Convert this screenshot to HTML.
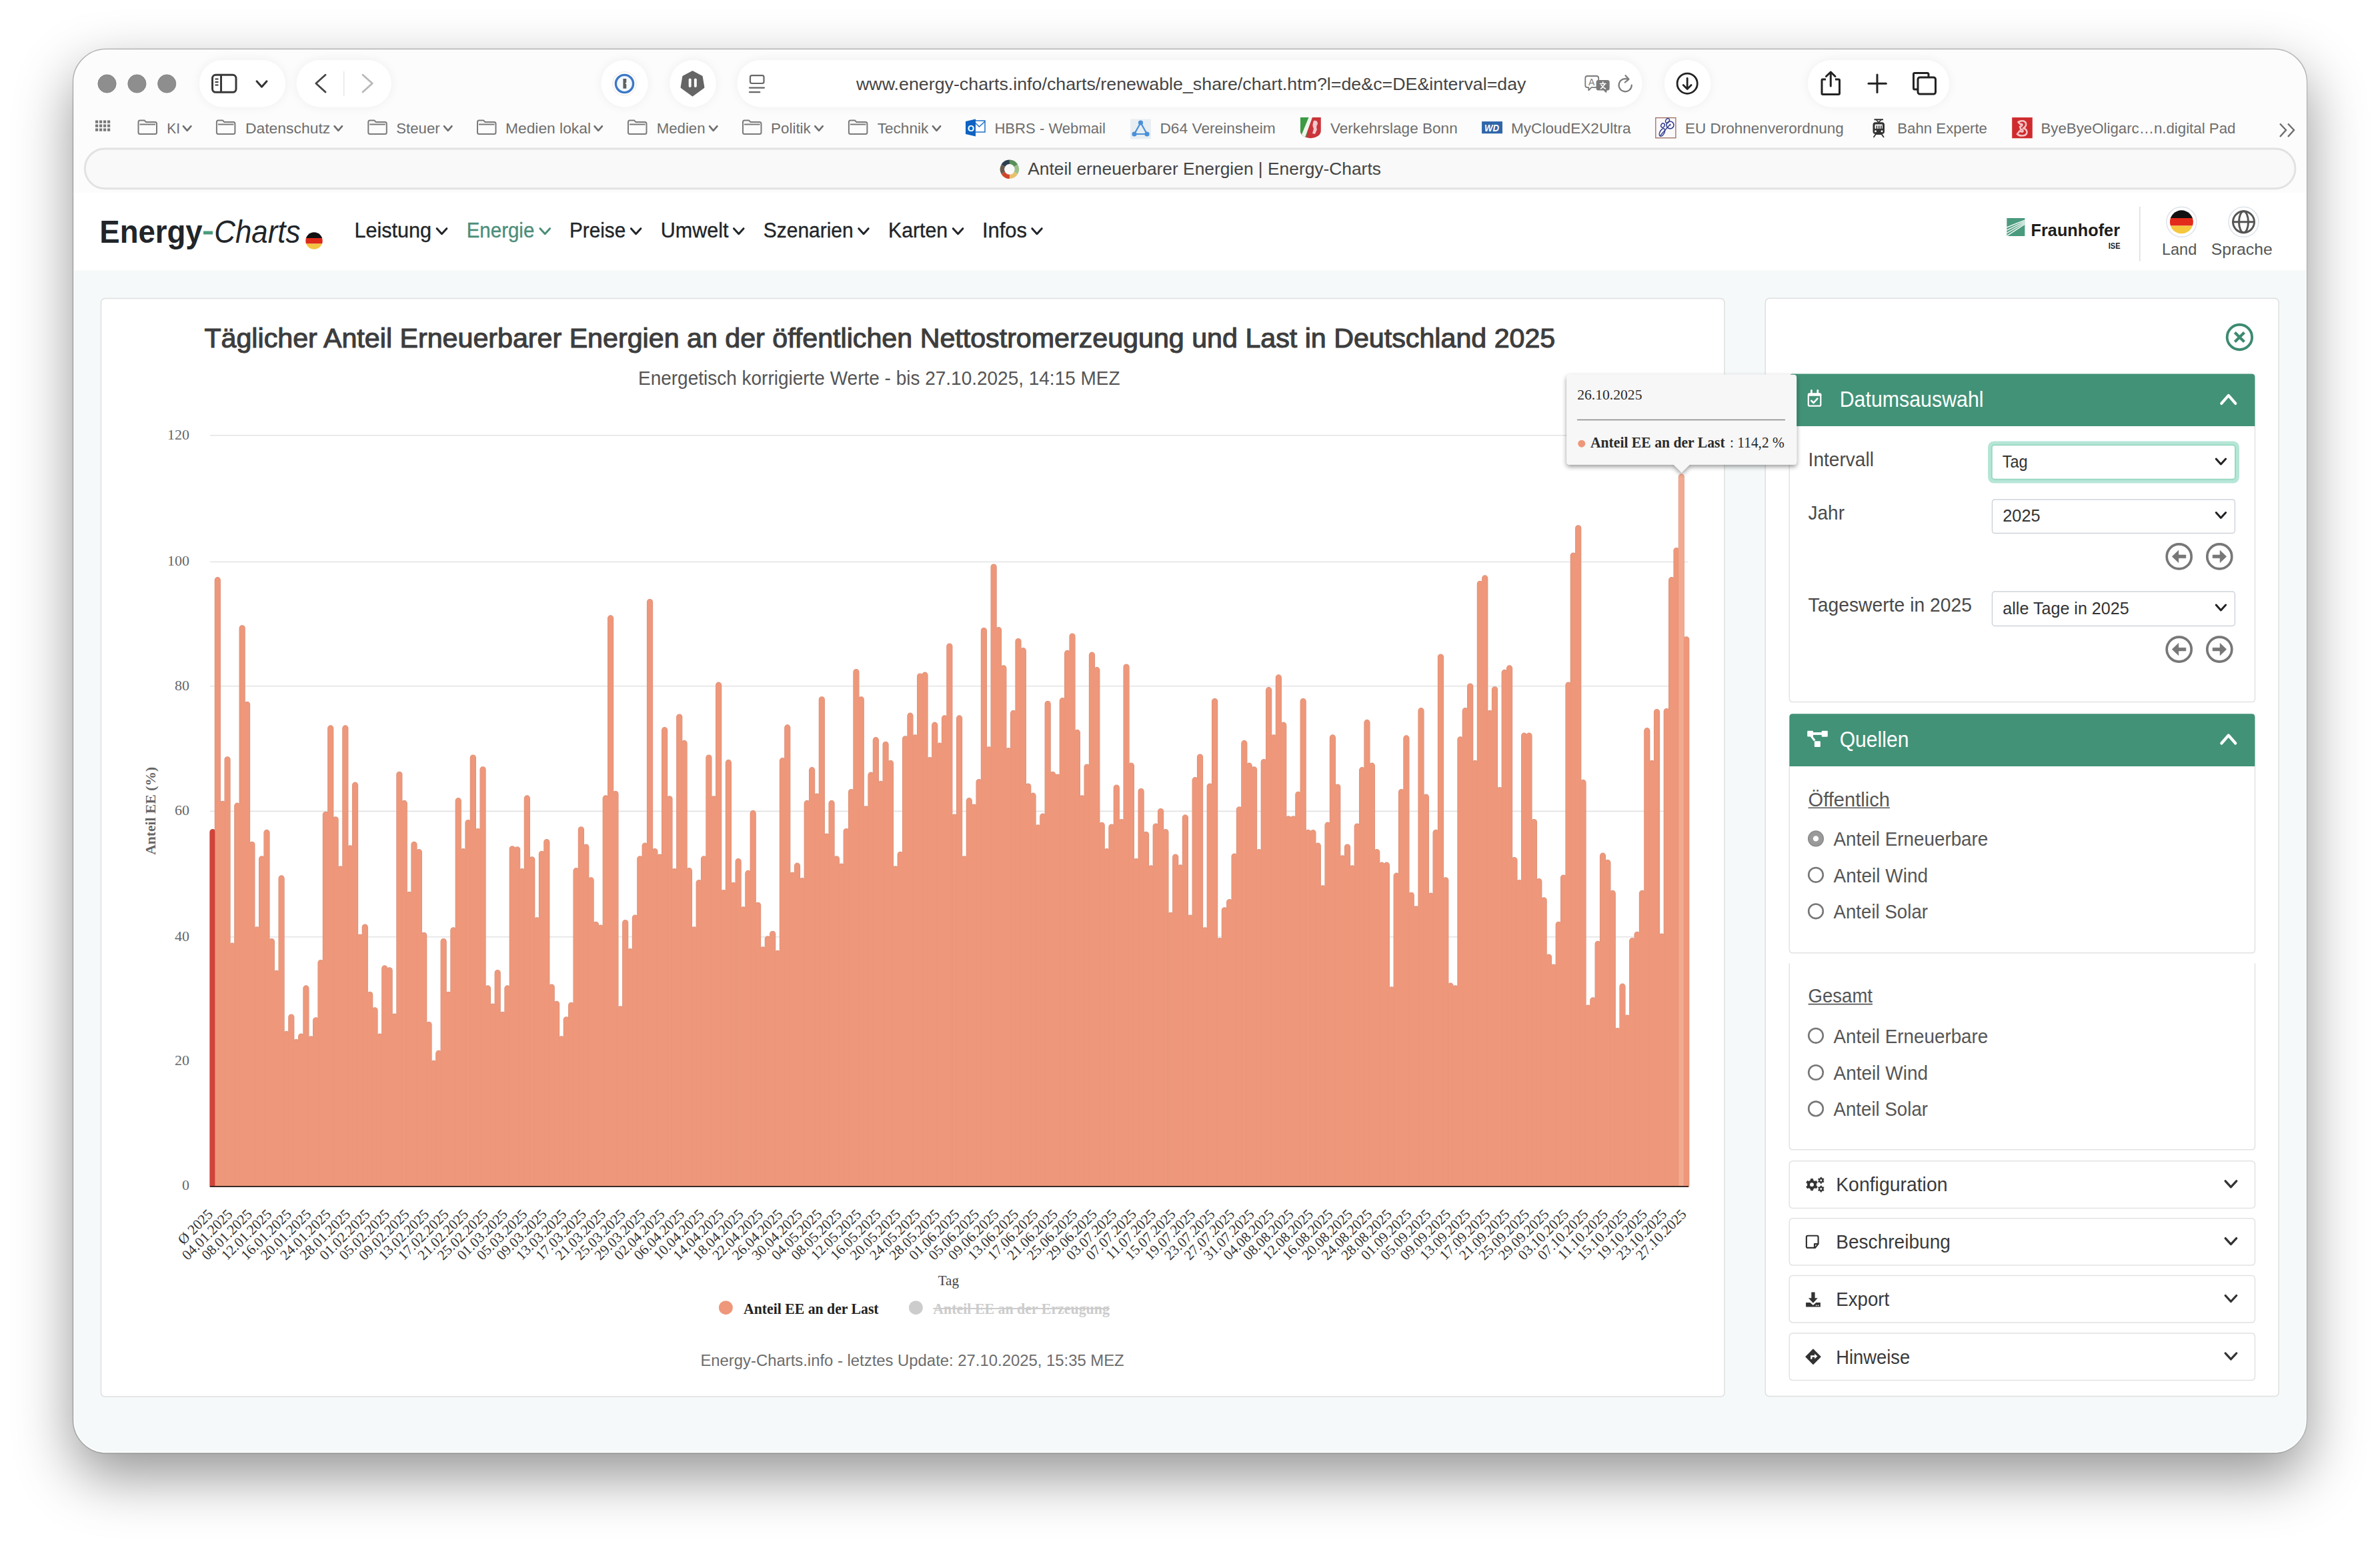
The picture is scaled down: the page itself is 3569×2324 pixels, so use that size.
<!DOCTYPE html>
<html><head><meta charset="utf-8"><title>Energy-Charts</title>
<style>
html,body{margin:0;padding:0;background:#ffffff;width:3569px;height:2324px;overflow:hidden;}
#win{position:absolute;left:109.5px;top:73.5px;width:3350.0px;height:2105.3px;border-radius:50px;background:#fcfcfc;
box-shadow:0 34px 86px 0 rgba(0,0,0,0.42);}
svg{position:absolute;left:0;top:0;}
</style></head><body>
<div id="win"></div>
<svg width="3569" height="2324" viewBox="0 0 3569 2324">
<defs>
<clipPath id="winclip"><rect x="109.5" y="73.5" width="3350.0" height="2105.3" rx="50" ry="50"/></clipPath>
<filter id="pillsh" x="-30%" y="-60%" width="160%" height="220%"><feGaussianBlur in="SourceAlpha" stdDeviation="8"/><feComponentTransfer><feFuncA type="linear" slope="0.06"/></feComponentTransfer><feMerge><feMergeNode/><feMergeNode in="SourceGraphic"/></feMerge></filter>
<filter id="ttsh" x="-10%" y="-20%" width="120%" height="150%"><feGaussianBlur in="SourceAlpha" stdDeviation="3.5"/><feOffset dy="3"/><feComponentTransfer><feFuncA type="linear" slope="0.42"/></feComponentTransfer><feMerge><feMergeNode/><feMergeNode in="SourceGraphic"/></feMerge></filter>
<filter id="glow" x="-10%" y="-30%" width="120%" height="160%"><feGaussianBlur stdDeviation="2"/></filter>
</defs>
<g clip-path="url(#winclip)">

<rect x="109.5" y="73.5" width="3350.0" height="220" fill="#fcfcfc"/>
<rect x="109.5" y="289" width="3350.0" height="117" fill="#ffffff"/>
<rect x="109.5" y="405.5" width="3350.0" height="1773.3000000000002" fill="#f5f9fa"/>
<circle cx="160.5" cy="125.5" r="13.6" fill="#8e8e8e" stroke="#7d7d7d" stroke-width="0.8"/>
<circle cx="205.4" cy="125.5" r="13.6" fill="#8e8e8e" stroke="#7d7d7d" stroke-width="0.8"/>
<circle cx="250.2" cy="125.5" r="13.6" fill="#8e8e8e" stroke="#7d7d7d" stroke-width="0.8"/>
<rect x="299" y="90" width="129.0" height="70.3" rx="35.2" fill="#ffffff" filter="url(#pillsh)"/>
<rect x="444.7" y="90" width="142.1" height="70.3" rx="35.2" fill="#ffffff" filter="url(#pillsh)"/>
<rect x="901.5" y="90" width="70.0" height="70.3" rx="35.2" fill="#ffffff" filter="url(#pillsh)"/>
<rect x="1004.5" y="90" width="69.2" height="70.3" rx="35.2" fill="#ffffff" filter="url(#pillsh)"/>
<rect x="1105.5" y="90" width="1356.9" height="70.3" rx="35.2" fill="#ffffff" filter="url(#pillsh)"/>
<rect x="2496" y="90" width="69.3" height="70.3" rx="35.2" fill="#ffffff" filter="url(#pillsh)"/>
<rect x="2711" y="90" width="212.0" height="70.3" rx="35.2" fill="#ffffff" filter="url(#pillsh)"/>
<rect x="318.5" y="112.3" width="35.5" height="26" rx="5" fill="none" stroke="#3a3a3a" stroke-width="3"/>
<line x1="331.5" y1="112.3" x2="331.5" y2="138.3" stroke="#3a3a3a" stroke-width="3"/>
<line x1="322.5" y1="118.5" x2="327.5" y2="118.5" stroke="#3a3a3a" stroke-width="1.8"/>
<line x1="322.5" y1="123" x2="327.5" y2="123" stroke="#3a3a3a" stroke-width="1.8"/>
<line x1="322.5" y1="127.5" x2="327.5" y2="127.5" stroke="#3a3a3a" stroke-width="1.8"/>
<polyline points="385.0,121.8 392.5,130.2 400.0,121.8" fill="none" stroke="#333" stroke-width="3" stroke-linecap="round" stroke-linejoin="round"/>
<polyline points="488,112.3 473.8,125 488,138" fill="none" stroke="#444" stroke-width="2.8" stroke-linecap="round" stroke-linejoin="round"/>
<line x1="515.7" y1="107" x2="515.7" y2="144" stroke="#e6e6e6" stroke-width="1.5"/>
<polyline points="544,112.3 558.3,125 544,138" fill="none" stroke="#b8b8b8" stroke-width="2.8" stroke-linecap="round" stroke-linejoin="round"/>
<circle cx="936.5" cy="125.5" r="17.8" fill="#ffffff" stroke="#e6dfd8" stroke-width="0.8"/>
<circle cx="936.5" cy="125.5" r="13.1" fill="#f4f9ff" stroke="#3d79c6" stroke-width="3.4"/>
<path d="M934.4,118 L939.3,118 L939.3,123.5 L937.6,125 L939.3,126.5 L939.3,132.7 L934.4,132.7 Z" fill="#5f5f5f"/>
<polygon points="1038.5,107.3 1052.6,114.8 1055.3,131 1038.5,143.4 1021.7,131 1024.4,114.8" fill="#656565" stroke="#656565" stroke-width="2.2" stroke-linejoin="round"/>
<rect x="1032.7" y="117.4" width="3.9" height="13.6" rx="1.9" fill="#fff"/><rect x="1040.9" y="117.4" width="3.9" height="13.6" rx="1.9" fill="#fff"/>
<rect x="1125" y="113.2" width="20.5" height="11.8" rx="2.5" fill="none" stroke="#666" stroke-width="2.2"/>
<line x1="1124" y1="131.6" x2="1146" y2="131.6" stroke="#666" stroke-width="2.2" stroke-linecap="round"/><line x1="1124" y1="138.2" x2="1139.3" y2="138.2" stroke="#666" stroke-width="2.2" stroke-linecap="round"/>
<text x="1284.0" y="135.1" font-family='"Liberation Sans", sans-serif' font-size="26.2" font-weight="normal" fill="#454545" text-anchor="start" textLength="1004.5" lengthAdjust="spacingAndGlyphs" >www.energy-charts.info/charts/renewable_share/chart.htm?l=de&amp;c=DE&amp;interval=day</text>
<path d="M2380.5,114 L2394,114 Q2397.2,114 2397.2,117.2 L2397.2,128 Q2397.2,131.2 2394,131.2 L2386.5,131.2 L2382.3,135.3 L2382.3,131.2 L2380.5,131.2 Q2377.3,131.2 2377.3,128 L2377.3,117.2 Q2377.3,114 2380.5,114 Z" fill="#fff" stroke="#7a7a7a" stroke-width="1.8" stroke-linejoin="round"/>
<text x="2382" y="128" font-family='"Liberation Sans", sans-serif' font-size="14" fill="#7a7a7a">A</text>
<path d="M2397,120 L2410.3,120 Q2413.7,120 2413.7,123.4 L2413.7,132.2 Q2413.7,135.6 2410.3,135.6 L2409.8,135.6 L2408.8,139.6 L2404.5,135.6 L2397,135.6 Q2393.6,135.6 2393.6,132.2 L2393.6,123.4 Q2393.6,120 2397,120 Z" fill="#7a7a7a"/>
<path d="M2399.5,125.5 L2408,125.5 M2403.7,122.8 L2403.7,125.5 M2400.5,133 Q2404.5,130 2406.5,125.8 M2401.2,127.5 Q2403.5,131 2407.5,133" fill="none" stroke="#fff" stroke-width="1.6" stroke-linecap="round"/>
<path d="M2446.8,127.7 A9.6,9.6 0 1 1 2441.5,119.1" fill="none" stroke="#7a7a7a" stroke-width="2.2" stroke-linecap="round"/>
<polyline points="2437.5,113.2 2442.5,118.8 2436.8,123.5" fill="none" stroke="#7a7a7a" stroke-width="2.2" stroke-linecap="round" stroke-linejoin="round"/>
<circle cx="2530.2" cy="125.2" r="15.1" fill="none" stroke="#222" stroke-width="2.8"/>
<line x1="2530.2" y1="117.5" x2="2530.2" y2="133" stroke="#222" stroke-width="2.8" stroke-linecap="round"/>
<polyline points="2524.2,127.6 2530.2,133.4 2536.2,127.6" fill="none" stroke="#222" stroke-width="2.8" stroke-linecap="round" stroke-linejoin="round"/>
<path d="M2738,119 L2733,119 Q2732,119 2732,120.5 L2732,140 Q2732,141.5 2733.5,141.5 L2757,141.5 Q2758.5,141.5 2758.5,140 L2758.5,120.5 Q2758.5,119 2757,119 L2752,119" fill="none" stroke="#222" stroke-width="3" stroke-linejoin="round"/>
<line x1="2745.3" y1="108.5" x2="2745.3" y2="129" stroke="#222" stroke-width="3" stroke-linecap="round"/>
<polyline points="2738.5,114.5 2745.3,108 2752,114.5" fill="none" stroke="#222" stroke-width="3" stroke-linecap="round" stroke-linejoin="round"/>
<line x1="2815" y1="112" x2="2815" y2="138.5" stroke="#222" stroke-width="3" stroke-linecap="round"/><line x1="2802" y1="125.3" x2="2828.3" y2="125.3" stroke="#222" stroke-width="3" stroke-linecap="round"/>
<path d="M2875,134 L2871,134 Q2869.5,134 2869.5,132 L2869.5,111 Q2869.5,109.5 2871.5,109.5 L2890,109.5 Q2892,109.5 2892,111.5 L2892,115" fill="none" stroke="#222" stroke-width="3"/>
<rect x="2876" y="116" width="26.5" height="25" rx="3" fill="none" stroke="#222" stroke-width="3"/>
<rect x="143.0" y="180.5" width="4.2" height="4.2" fill="#777"/>
<rect x="149.0" y="180.5" width="4.2" height="4.2" fill="#777"/>
<rect x="155.0" y="180.5" width="4.2" height="4.2" fill="#777"/>
<rect x="161.0" y="180.5" width="4.2" height="4.2" fill="#777"/>
<rect x="143.0" y="186.5" width="4.2" height="4.2" fill="#777"/>
<rect x="149.0" y="186.5" width="4.2" height="4.2" fill="#777"/>
<rect x="155.0" y="186.5" width="4.2" height="4.2" fill="#777"/>
<rect x="161.0" y="186.5" width="4.2" height="4.2" fill="#777"/>
<rect x="143.0" y="192.5" width="4.2" height="4.2" fill="#777"/>
<rect x="149.0" y="192.5" width="4.2" height="4.2" fill="#777"/>
<rect x="155.0" y="192.5" width="4.2" height="4.2" fill="#777"/>
<rect x="161.0" y="192.5" width="4.2" height="4.2" fill="#777"/>
<path d="M207.5,183 Q207.5,180.5 210.0,180.5 L216.5,180.5 L219.0,183 L232.5,183 Q235.0,183 235.0,185.5 L235.0,198.5 Q235.0,201 232.5,201 L210.0,201 Q207.5,201 207.5,198.5 Z" fill="none" stroke="#7a7a7a" stroke-width="2"/>
<line x1="209.5" y1="186.5" x2="233.0" y2="186.5" stroke="#7a7a7a" stroke-width="2"/>
<text x="250.2" y="199.8" font-family='"Liberation Sans", sans-serif' font-size="22.2" font-weight="normal" fill="#6e6e6e" text-anchor="start" textLength="19.8" lengthAdjust="spacingAndGlyphs" >KI</text>
<polyline points="274.9,189.2 280.7,195.8 286.4,189.2" fill="none" stroke="#6e6e6e" stroke-width="2.6" stroke-linecap="round" stroke-linejoin="round"/>
<path d="M324.9,183 Q324.9,180.5 327.4,180.5 L333.9,180.5 L336.4,183 L349.9,183 Q352.4,183 352.4,185.5 L352.4,198.5 Q352.4,201 349.9,201 L327.4,201 Q324.9,201 324.9,198.5 Z" fill="none" stroke="#7a7a7a" stroke-width="2"/>
<line x1="326.9" y1="186.5" x2="350.4" y2="186.5" stroke="#7a7a7a" stroke-width="2"/>
<text x="368.0" y="199.8" font-family='"Liberation Sans", sans-serif' font-size="22.2" font-weight="normal" fill="#6e6e6e" text-anchor="start" textLength="127.2" lengthAdjust="spacingAndGlyphs" >Datenschutz</text>
<polyline points="501.6,189.2 507.3,195.8 513.0,189.2" fill="none" stroke="#6e6e6e" stroke-width="2.6" stroke-linecap="round" stroke-linejoin="round"/>
<path d="M552.3,183 Q552.3,180.5 554.8,180.5 L561.3,180.5 L563.8,183 L577.3,183 Q579.8,183 579.8,185.5 L579.8,198.5 Q579.8,201 577.3,201 L554.8,201 Q552.3,201 552.3,198.5 Z" fill="none" stroke="#7a7a7a" stroke-width="2"/>
<line x1="554.3" y1="186.5" x2="577.8" y2="186.5" stroke="#7a7a7a" stroke-width="2"/>
<text x="594.3" y="199.8" font-family='"Liberation Sans", sans-serif' font-size="22.2" font-weight="normal" fill="#6e6e6e" text-anchor="start" textLength="65.4" lengthAdjust="spacingAndGlyphs" >Steuer</text>
<polyline points="666.0,189.2 671.8,195.8 677.5,189.2" fill="none" stroke="#6e6e6e" stroke-width="2.6" stroke-linecap="round" stroke-linejoin="round"/>
<path d="M716,183 Q716,180.5 718.5,180.5 L725,180.5 L727.5,183 L741,183 Q743.5,183 743.5,185.5 L743.5,198.5 Q743.5,201 741,201 L718.5,201 Q716,201 716,198.5 Z" fill="none" stroke="#7a7a7a" stroke-width="2"/>
<line x1="718" y1="186.5" x2="741.5" y2="186.5" stroke="#7a7a7a" stroke-width="2"/>
<text x="758.0" y="199.8" font-family='"Liberation Sans", sans-serif' font-size="22.2" font-weight="normal" fill="#6e6e6e" text-anchor="start" textLength="128.0" lengthAdjust="spacingAndGlyphs" >Medien lokal</text>
<polyline points="891.5,189.2 897.2,195.8 903.0,189.2" fill="none" stroke="#6e6e6e" stroke-width="2.6" stroke-linecap="round" stroke-linejoin="round"/>
<path d="M942,183 Q942,180.5 944.5,180.5 L951,180.5 L953.5,183 L967,183 Q969.5,183 969.5,185.5 L969.5,198.5 Q969.5,201 967,201 L944.5,201 Q942,201 942,198.5 Z" fill="none" stroke="#7a7a7a" stroke-width="2"/>
<line x1="944" y1="186.5" x2="967.5" y2="186.5" stroke="#7a7a7a" stroke-width="2"/>
<text x="984.7" y="199.8" font-family='"Liberation Sans", sans-serif' font-size="22.2" font-weight="normal" fill="#6e6e6e" text-anchor="start" textLength="72.9" lengthAdjust="spacingAndGlyphs" >Medien</text>
<polyline points="1064.0,189.2 1069.7,195.8 1075.5,189.2" fill="none" stroke="#6e6e6e" stroke-width="2.6" stroke-linecap="round" stroke-linejoin="round"/>
<path d="M1114,183 Q1114,180.5 1116.5,180.5 L1123,180.5 L1125.5,183 L1139,183 Q1141.5,183 1141.5,185.5 L1141.5,198.5 Q1141.5,201 1139,201 L1116.5,201 Q1114,201 1114,198.5 Z" fill="none" stroke="#7a7a7a" stroke-width="2"/>
<line x1="1116" y1="186.5" x2="1139.5" y2="186.5" stroke="#7a7a7a" stroke-width="2"/>
<text x="1156.0" y="199.8" font-family='"Liberation Sans", sans-serif' font-size="22.2" font-weight="normal" fill="#6e6e6e" text-anchor="start" textLength="59.8" lengthAdjust="spacingAndGlyphs" >Politik</text>
<polyline points="1222.2,189.2 1228.0,195.8 1233.8,189.2" fill="none" stroke="#6e6e6e" stroke-width="2.6" stroke-linecap="round" stroke-linejoin="round"/>
<path d="M1272.9,183 Q1272.9,180.5 1275.4,180.5 L1281.9,180.5 L1284.4,183 L1297.9,183 Q1300.4,183 1300.4,185.5 L1300.4,198.5 Q1300.4,201 1297.9,201 L1275.4,201 Q1272.9,201 1272.9,198.5 Z" fill="none" stroke="#7a7a7a" stroke-width="2"/>
<line x1="1274.9" y1="186.5" x2="1298.4" y2="186.5" stroke="#7a7a7a" stroke-width="2"/>
<text x="1315.7" y="199.8" font-family='"Liberation Sans", sans-serif' font-size="22.2" font-weight="normal" fill="#6e6e6e" text-anchor="start" textLength="76.6" lengthAdjust="spacingAndGlyphs" >Technik</text>
<polyline points="1398.8,189.2 1404.5,195.8 1410.2,189.2" fill="none" stroke="#6e6e6e" stroke-width="2.6" stroke-linecap="round" stroke-linejoin="round"/>
<text x="1491.4" y="199.8" font-family='"Liberation Sans", sans-serif' font-size="22.2" font-weight="normal" fill="#6e6e6e" text-anchor="start" textLength="166.5" lengthAdjust="spacingAndGlyphs" >HBRS - Webmail</text>
<text x="1739.4" y="199.8" font-family='"Liberation Sans", sans-serif' font-size="22.2" font-weight="normal" fill="#6e6e6e" text-anchor="start" textLength="173.3" lengthAdjust="spacingAndGlyphs" >D64 Vereinsheim</text>
<text x="1995.0" y="199.8" font-family='"Liberation Sans", sans-serif' font-size="22.2" font-weight="normal" fill="#6e6e6e" text-anchor="start" textLength="190.7" lengthAdjust="spacingAndGlyphs" >Verkehrslage Bonn</text>
<text x="2266.0" y="199.8" font-family='"Liberation Sans", sans-serif' font-size="22.2" font-weight="normal" fill="#6e6e6e" text-anchor="start" textLength="179.6" lengthAdjust="spacingAndGlyphs" >MyCloudEX2Ultra</text>
<text x="2527.1" y="199.8" font-family='"Liberation Sans", sans-serif' font-size="22.2" font-weight="normal" fill="#6e6e6e" text-anchor="start" textLength="237.6" lengthAdjust="spacingAndGlyphs" >EU Drohnenverordnung</text>
<text x="2845.2" y="199.8" font-family='"Liberation Sans", sans-serif' font-size="22.2" font-weight="normal" fill="#6e6e6e" text-anchor="start" textLength="134.8" lengthAdjust="spacingAndGlyphs" >Bahn Experte</text>
<text x="3060.5" y="199.8" font-family='"Liberation Sans", sans-serif' font-size="22.2" font-weight="normal" fill="#6e6e6e" text-anchor="start" textLength="291.9" lengthAdjust="spacingAndGlyphs" >ByeByeOligarc…n.digital Pad</text>
<rect x="1460" y="181" width="17" height="17" fill="#fff" stroke="#1f6fc5" stroke-width="1.5"/>
<polyline points="1460,182 1468.5,190 1477,182" fill="none" stroke="#1f6fc5" stroke-width="1.5"/>
<path d="M1448,182 L1463,178.5 L1463,204.5 L1448,201 Z" fill="#0f62c1"/>
<text x="1451" y="197" font-family='"Liberation Sans", sans-serif' font-size="13" font-weight="bold" fill="#fff">O</text>
<rect x="1695.2" y="178.5" width="30.7" height="30" fill="#e8eef2"/>
<polygon points="1710.5,184 1701,201 1720,201" fill="none" stroke="#4a90d9" stroke-width="2.2"/>
<circle cx="1710.5" cy="184" r="3.6" fill="#4a90d9"/>
<circle cx="1701" cy="201" r="3.6" fill="#4a90d9"/>
<circle cx="1720" cy="201" r="3.6" fill="#4a90d9"/>
<clipPath id="nrwclip"><path d="M1950,176 L1980.8,176 L1980.8,196 Q1980.8,205.5 1965.4,207.3 Q1950,205.5 1950,196 Z"/></clipPath>
<g clip-path="url(#nrwclip)"><rect x="1950" y="176" width="31" height="32" fill="#c9353b"/>
<polygon points="1950,176 1966,176 1958,208 1950,208" fill="#3c9a43"/>
<polygon points="1962.5,176 1968,176 1956.5,207.5 1951,204" fill="#eef6ee"/>
<path d="M1970,181 Q1976,180 1976,186 Q1973,189 1975,194 L1972,201 L1968,200 L1970,193 Q1967,188 1970,181 Z" fill="#f3c9cc"/>
</g>
<rect x="2222.1" y="182.1" width="30.9" height="18.1" fill="#2f66a9"/>
<text x="2226" y="197" font-family='"Liberation Sans", sans-serif' font-size="14.5" font-style="italic" font-weight="bold" fill="#fff" textLength="22" lengthAdjust="spacingAndGlyphs">WD</text>
<rect x="2482.8" y="176.6" width="30.1" height="30.2" fill="#fbf8fa" stroke="#9c6d5f" stroke-width="1.3"/>
<circle cx="2504.5" cy="187.5" r="5.5" fill="none" stroke="#2c3a8c" stroke-width="1.5"/>
<circle cx="2504.5" cy="187.5" r="1" fill="#2c3a8c"/>
<ellipse cx="2492.5" cy="198.5" rx="3.3" ry="6.3" transform="rotate(30 2492.5 198.5)" fill="none" stroke="#2c3a8c" stroke-width="1.5"/>
<ellipse cx="2500.5" cy="181" rx="2.6" ry="3.6" transform="rotate(30 2500.5 181)" fill="none" stroke="#2c3a8c" stroke-width="1.4"/>
<ellipse cx="2493.5" cy="188" rx="2.6" ry="3.2" transform="rotate(30 2493.5 188)" fill="none" stroke="#2c3a8c" stroke-width="1.4"/>
<line x1="2489" y1="204" x2="2505" y2="186" stroke="#2c3a8c" stroke-width="1.3"/>
<line x1="2810.5" y1="179.2" x2="2824" y2="179.2" stroke="#333" stroke-width="2"/>
<polyline points="2813.5,179.5 2817.2,183.5 2821,179.5" fill="none" stroke="#333" stroke-width="1.6"/>
<rect x="2808.5" y="183.3" width="17.5" height="17.8" rx="4" fill="#333"/>
<rect x="2811.5" y="186.5" width="11.5" height="6.5" rx="1" fill="#fff"/>
<rect x="2813.6" y="188.3" width="1.6" height="4.7" fill="#333"/><rect x="2816.9" y="188.3" width="1.6" height="4.7" fill="#333"/><rect x="2820.2" y="188.3" width="1.6" height="4.7" fill="#333"/>
<circle cx="2812.5" cy="196.8" r="1.5" fill="#fff"/><circle cx="2822" cy="196.8" r="1.5" fill="#fff"/>
<polyline points="2809.5,206 2813,201 2821.5,201 2825,206" fill="none" stroke="#333" stroke-width="1.8"/>
<rect x="3017.2" y="176.1" width="30.6" height="31.2" fill="#cf2b2e"/>
<path d="M3026.5,183 Q3030,180.5 3034.5,181.5 Q3039,183 3038,188 Q3037,191 3034,192.3 Q3040,194 3039.5,199 Q3038.5,203.5 3032,203.5 Q3027.5,203.5 3025,201 L3029,196 Q3032,198.5 3033.5,197 Q3034,194.5 3030.5,194 L3029,190 Q3032.5,189 3032.5,187 Q3032,185.5 3030,186.5 Z" fill="none" stroke="#f4c4c6" stroke-width="2.6" stroke-linejoin="round"/>
<polyline points="3419,185.5 3428,195 3419,205" fill="none" stroke="#6e6e6e" stroke-width="2.4"/><polyline points="3431,185.5 3440,195 3431,205" fill="none" stroke="#6e6e6e" stroke-width="2.4"/>
<rect x="127.3" y="222.9" width="3314.6" height="59.8" rx="29.9" fill="#f9f9f9" stroke="#e2e2e2" stroke-width="3"/>
<path d="M1513.9,242.8 A11,11 0 0 1 1523.4,248.3" fill="none" stroke="#5a8f5a" stroke-width="6.5"/>
<path d="M1523.4,248.3 A11,11 0 0 1 1523.4,259.3" fill="none" stroke="#9dc08b" stroke-width="6.5"/>
<path d="M1523.4,259.3 A11,11 0 0 1 1513.9,264.8" fill="none" stroke="#e8c170" stroke-width="6.5"/>
<path d="M1513.9,264.8 A11,11 0 0 1 1504.4,259.3" fill="none" stroke="#d0442c" stroke-width="6.5"/>
<path d="M1504.4,259.3 A11,11 0 0 1 1504.4,248.3" fill="none" stroke="#6b5b4b" stroke-width="6.5"/>
<path d="M1504.4,248.3 A11,11 0 0 1 1513.9,242.8" fill="none" stroke="#2c3e50" stroke-width="6.5"/>
<text x="1541.2" y="261.9" font-family='"Liberation Sans", sans-serif' font-size="25.6" font-weight="normal" fill="#444" text-anchor="start" textLength="529.7" lengthAdjust="spacingAndGlyphs" >Anteil erneuerbarer Energien | Energy-Charts</text>
<text x="149.3" y="364.0" font-family='"Liberation Sans", sans-serif' font-size="48.5" font-weight="bold" fill="#212529" text-anchor="start" textLength="154.4" lengthAdjust="spacingAndGlyphs" >Energy</text>
<rect x="305" y="346.5" width="14" height="5" fill="#4a9a7a"/>
<text x="321.3" y="364.0" font-family='"Liberation Sans", sans-serif' font-size="48.5" font-weight="normal" fill="#212529" text-anchor="start" textLength="129.0" lengthAdjust="spacingAndGlyphs" font-style="italic">Charts</text>
<clipPath id="flag1"><circle cx="471" cy="361" r="12.7"/></clipPath>
<g clip-path="url(#flag1)"><rect x="458" y="348" width="26" height="9" fill="#111"/><rect x="458" y="357" width="26" height="8.5" fill="#dd2a1a"/><rect x="458" y="365.5" width="26" height="9" fill="#f4c542"/></g>
<text x="531.4" y="356.3" font-family='"Liberation Sans", sans-serif' font-size="31" font-weight="normal" fill="#212529" text-anchor="start" textLength="115.6" lengthAdjust="spacingAndGlyphs" stroke="#212529" stroke-width="0.35">Leistung</text>
<polyline points="655.2,342.7 662.5,350.7 669.8,342.7" fill="none" stroke="#212529" stroke-width="3" stroke-linecap="round" stroke-linejoin="round"/>
<text x="699.7" y="356.3" font-family='"Liberation Sans", sans-serif' font-size="31" font-weight="normal" fill="#4b8d79" text-anchor="start" textLength="101.6" lengthAdjust="spacingAndGlyphs" stroke="#4b8d79" stroke-width="0.35">Energie</text>
<polyline points="810.0,342.7 817.3,350.7 824.5,342.7" fill="none" stroke="#4b8d79" stroke-width="3" stroke-linecap="round" stroke-linejoin="round"/>
<text x="854.0" y="356.3" font-family='"Liberation Sans", sans-serif' font-size="31" font-weight="normal" fill="#212529" text-anchor="start" textLength="84.2" lengthAdjust="spacingAndGlyphs" stroke="#212529" stroke-width="0.35">Preise</text>
<polyline points="946.4,342.7 953.6,350.7 960.9,342.7" fill="none" stroke="#212529" stroke-width="3" stroke-linecap="round" stroke-linejoin="round"/>
<text x="990.8" y="356.3" font-family='"Liberation Sans", sans-serif' font-size="31" font-weight="normal" fill="#212529" text-anchor="start" textLength="101.7" lengthAdjust="spacingAndGlyphs" stroke="#212529" stroke-width="0.35">Umwelt</text>
<polyline points="1100.5,342.7 1107.8,350.7 1115.0,342.7" fill="none" stroke="#212529" stroke-width="3" stroke-linecap="round" stroke-linejoin="round"/>
<text x="1144.8" y="356.3" font-family='"Liberation Sans", sans-serif' font-size="31" font-weight="normal" fill="#212529" text-anchor="start" textLength="134.9" lengthAdjust="spacingAndGlyphs" stroke="#212529" stroke-width="0.35">Szenarien</text>
<polyline points="1287.8,342.7 1295.0,350.7 1302.2,342.7" fill="none" stroke="#212529" stroke-width="3" stroke-linecap="round" stroke-linejoin="round"/>
<text x="1332.0" y="356.3" font-family='"Liberation Sans", sans-serif' font-size="31" font-weight="normal" fill="#212529" text-anchor="start" textLength="89.1" lengthAdjust="spacingAndGlyphs" stroke="#212529" stroke-width="0.35">Karten</text>
<polyline points="1429.3,342.7 1436.6,350.7 1443.8,342.7" fill="none" stroke="#212529" stroke-width="3" stroke-linecap="round" stroke-linejoin="round"/>
<text x="1473.0" y="356.3" font-family='"Liberation Sans", sans-serif' font-size="31" font-weight="normal" fill="#212529" text-anchor="start" textLength="67.0" lengthAdjust="spacingAndGlyphs" stroke="#212529" stroke-width="0.35">Infos</text>
<polyline points="1547.8,342.7 1555.0,350.7 1562.2,342.7" fill="none" stroke="#212529" stroke-width="3" stroke-linecap="round" stroke-linejoin="round"/>
<clipPath id="fhclip"><rect x="3009.2" y="327" width="27.4" height="27"/></clipPath>
<g clip-path="url(#fhclip)"><rect x="3009.2" y="327" width="27.4" height="27" fill="#4a9a7e"/>
<path d="M3000,345 Q3020,336.0 3040,329.0" fill="none" stroke="#e9f3ef" stroke-width="1.6"/>
<path d="M3000,350 Q3020,339.5 3040,330.5" fill="none" stroke="#e9f3ef" stroke-width="1.6"/>
<path d="M3000,355 Q3020,343.0 3040,332.0" fill="none" stroke="#e9f3ef" stroke-width="1.6"/>
<path d="M3000,360 Q3020,346.5 3040,333.5" fill="none" stroke="#e9f3ef" stroke-width="1.6"/>
</g>
<text x="3045.6" y="354.0" font-family='"Liberation Sans", sans-serif' font-size="26" font-weight="bold" fill="#1d1d1d" text-anchor="start" textLength="133.4" lengthAdjust="spacingAndGlyphs" >Fraunhofer</text>
<text x="3161.7" y="373.4" font-family='"Liberation Sans", sans-serif' font-size="12.5" font-weight="bold" fill="#1d1d1d" text-anchor="start" textLength="17.9" lengthAdjust="spacingAndGlyphs" >ISE</text>
<line x1="3208.8" y1="309.7" x2="3208.8" y2="391.6" stroke="#dddddd" stroke-width="1.5"/>
<circle cx="3271.4" cy="332.8" r="22.5" fill="#fff" stroke="#dde3ea" stroke-width="1.5"/>
<clipPath id="flag2"><circle cx="3271.4" cy="332.8" r="17.5"/></clipPath>
<g clip-path="url(#flag2)"><rect x="3250" y="315" width="45" height="12" fill="#111"/><rect x="3250" y="327" width="45" height="11.5" fill="#e32b1b"/><rect x="3250" y="338.5" width="45" height="13" fill="#f5c73d"/></g>
<circle cx="3364.5" cy="332.8" r="22.5" fill="#fff" stroke="#dde3ea" stroke-width="1.5"/>
<circle cx="3364.5" cy="332.8" r="16" fill="none" stroke="#555" stroke-width="3"/>
<ellipse cx="3364.5" cy="332.8" rx="7" ry="16" fill="none" stroke="#555" stroke-width="3"/>
<line x1="3348.5" y1="332.8" x2="3380.5" y2="332.8" stroke="#555" stroke-width="3"/>
<text x="3241.9" y="381.5" font-family='"Liberation Sans", sans-serif' font-size="24.5" font-weight="normal" fill="#555" text-anchor="start" textLength="52.4" lengthAdjust="spacingAndGlyphs" >Land</text>
<text x="3315.7" y="381.5" font-family='"Liberation Sans", sans-serif' font-size="24.5" font-weight="normal" fill="#555" text-anchor="start" textLength="92.0" lengthAdjust="spacingAndGlyphs" >Sprache</text>
<rect x="151.5" y="447.5" width="2434.5" height="1646.5" rx="6" fill="#ffffff" stroke="#dfdfdf" stroke-width="1.5"/>
<text x="306.4" y="521.3" font-family='"Liberation Sans", sans-serif' font-size="40.5" font-weight="normal" fill="#3d3d3d" text-anchor="start" textLength="2025.9" lengthAdjust="spacingAndGlyphs" stroke="#3d3d3d" stroke-width="1.1">Täglicher Anteil Erneuerbarer Energien an der öffentlichen Nettostromerzeugung und Last in Deutschland 2025</text>
<text x="957.0" y="577.0" font-family='"Liberation Sans", sans-serif' font-size="29" font-weight="normal" fill="#555" text-anchor="start" textLength="722.6" lengthAdjust="spacingAndGlyphs" >Energetisch korrigierte Werte - bis 27.10.2025, 14:15 MEZ</text>
<line x1="315" y1="652.8" x2="2531" y2="652.8" stroke="#e3e3e3" stroke-width="1.6"/>
<text x="284.0" y="658.6" font-family='"Liberation Serif", serif' font-size="22" font-weight="normal" fill="#666" text-anchor="end" >120</text>
<line x1="315" y1="842.5" x2="2531" y2="842.5" stroke="#e3e3e3" stroke-width="1.6"/>
<text x="284.0" y="848.3" font-family='"Liberation Serif", serif' font-size="22" font-weight="normal" fill="#666" text-anchor="end" >100</text>
<line x1="315" y1="1028.8" x2="2531" y2="1028.8" stroke="#e3e3e3" stroke-width="1.6"/>
<text x="284.0" y="1034.6" font-family='"Liberation Serif", serif' font-size="22" font-weight="normal" fill="#666" text-anchor="end" >80</text>
<line x1="315" y1="1216.4" x2="2531" y2="1216.4" stroke="#e3e3e3" stroke-width="1.6"/>
<text x="284.0" y="1222.2" font-family='"Liberation Serif", serif' font-size="22" font-weight="normal" fill="#666" text-anchor="end" >60</text>
<line x1="315" y1="1404.7" x2="2531" y2="1404.7" stroke="#e3e3e3" stroke-width="1.6"/>
<text x="284.0" y="1410.5" font-family='"Liberation Serif", serif' font-size="22" font-weight="normal" fill="#666" text-anchor="end" >40</text>
<line x1="315" y1="1591.5" x2="2531" y2="1591.5" stroke="#e3e3e3" stroke-width="1.6"/>
<text x="284.0" y="1597.3" font-family='"Liberation Serif", serif' font-size="22" font-weight="normal" fill="#666" text-anchor="end" >20</text>
<text x="284.0" y="1784.4" font-family='"Liberation Serif", serif' font-size="22" font-weight="normal" fill="#666" text-anchor="end" >0</text>
<text transform="translate(232.5,1215.8) rotate(-90)" font-family='"Liberation Serif", serif' font-size="22" font-weight="bold" fill="#666" text-anchor="middle" textLength="132" lengthAdjust="spacingAndGlyphs">Anteil EE (%)</text>
<g><path d="M315.05,1779.0 L315.05,1247.53 A3.9,3.9 0 0 1 322.85,1247.53 L322.85,1779.0 Z" fill="none" stroke="#b8473c" stroke-width="1.4"/><path d="M322.42,1779.0 L322.42,869.68 A3.9,3.9 0 0 1 330.22,869.68 L330.22,1779.0 Z" fill="none" stroke="#d99079" stroke-width="1.4"/><path d="M329.78,1779.0 L329.78,1205.34 A3.9,3.9 0 0 1 337.58,1205.34 L337.58,1779.0 Z" fill="none" stroke="#d99079" stroke-width="1.4"/><path d="M337.15,1779.0 L337.15,1138.77 A3.9,3.9 0 0 1 344.95,1138.77 L344.95,1779.0 Z" fill="none" stroke="#d99079" stroke-width="1.4"/><path d="M344.51,1779.0 L344.51,1418.17 A3.9,3.9 0 0 1 352.31,1418.17 L352.31,1779.0 Z" fill="none" stroke="#d99079" stroke-width="1.4"/><path d="M351.88,1779.0 L351.88,1208.15 A3.9,3.9 0 0 1 359.68,1208.15 L359.68,1779.0 Z" fill="none" stroke="#d99079" stroke-width="1.4"/><path d="M359.25,1779.0 L359.25,941.87 A3.9,3.9 0 0 1 367.05,941.87 L367.05,1779.0 Z" fill="none" stroke="#d99079" stroke-width="1.4"/><path d="M366.61,1779.0 L366.61,1056.26 A3.9,3.9 0 0 1 374.41,1056.26 L374.41,1779.0 Z" fill="none" stroke="#d99079" stroke-width="1.4"/><path d="M373.98,1779.0 L373.98,1266.28 A3.9,3.9 0 0 1 381.78,1266.28 L381.78,1779.0 Z" fill="none" stroke="#d99079" stroke-width="1.4"/><path d="M381.34,1779.0 L381.34,1393.80 A3.9,3.9 0 0 1 389.14,1393.80 L389.14,1779.0 Z" fill="none" stroke="#d99079" stroke-width="1.4"/><path d="M388.71,1779.0 L388.71,1287.85 A3.9,3.9 0 0 1 396.51,1287.85 L396.51,1779.0 Z" fill="none" stroke="#d99079" stroke-width="1.4"/><path d="M396.08,1779.0 L396.08,1248.47 A3.9,3.9 0 0 1 403.88,1248.47 L403.88,1779.0 Z" fill="none" stroke="#d99079" stroke-width="1.4"/><path d="M403.44,1779.0 L403.44,1411.61 A3.9,3.9 0 0 1 411.24,1411.61 L411.24,1779.0 Z" fill="none" stroke="#d99079" stroke-width="1.4"/><path d="M410.81,1779.0 L410.81,1459.43 A3.9,3.9 0 0 1 418.61,1459.43 L418.61,1779.0 Z" fill="none" stroke="#d99079" stroke-width="1.4"/><path d="M418.17,1779.0 L418.17,1316.91 A3.9,3.9 0 0 1 425.97,1316.91 L425.97,1779.0 Z" fill="none" stroke="#d99079" stroke-width="1.4"/><path d="M425.54,1779.0 L425.54,1550.38 A3.9,3.9 0 0 1 433.34,1550.38 L433.34,1779.0 Z" fill="none" stroke="#d99079" stroke-width="1.4"/><path d="M432.91,1779.0 L432.91,1525.06 A3.9,3.9 0 0 1 440.71,1525.06 L440.71,1779.0 Z" fill="none" stroke="#d99079" stroke-width="1.4"/><path d="M440.27,1779.0 L440.27,1562.56 A3.9,3.9 0 0 1 448.07,1562.56 L448.07,1779.0 Z" fill="none" stroke="#d99079" stroke-width="1.4"/><path d="M447.64,1779.0 L447.64,1554.13 A3.9,3.9 0 0 1 455.44,1554.13 L455.44,1779.0 Z" fill="none" stroke="#d99079" stroke-width="1.4"/><path d="M455.00,1779.0 L455.00,1481.93 A3.9,3.9 0 0 1 462.80,1481.93 L462.80,1779.0 Z" fill="none" stroke="#d99079" stroke-width="1.4"/><path d="M462.37,1779.0 L462.37,1557.88 A3.9,3.9 0 0 1 470.17,1557.88 L470.17,1779.0 Z" fill="none" stroke="#d99079" stroke-width="1.4"/><path d="M469.74,1779.0 L469.74,1529.75 A3.9,3.9 0 0 1 477.54,1529.75 L477.54,1779.0 Z" fill="none" stroke="#d99079" stroke-width="1.4"/><path d="M477.10,1779.0 L477.10,1443.49 A3.9,3.9 0 0 1 484.90,1443.49 L484.90,1779.0 Z" fill="none" stroke="#d99079" stroke-width="1.4"/><path d="M484.47,1779.0 L484.47,1221.28 A3.9,3.9 0 0 1 492.27,1221.28 L492.27,1779.0 Z" fill="none" stroke="#d99079" stroke-width="1.4"/><path d="M491.83,1779.0 L491.83,1091.89 A3.9,3.9 0 0 1 499.63,1091.89 L499.63,1779.0 Z" fill="none" stroke="#d99079" stroke-width="1.4"/><path d="M499.20,1779.0 L499.20,1228.78 A3.9,3.9 0 0 1 507.00,1228.78 L507.00,1779.0 Z" fill="none" stroke="#d99079" stroke-width="1.4"/><path d="M506.57,1779.0 L506.57,1302.85 A3.9,3.9 0 0 1 514.37,1302.85 L514.37,1779.0 Z" fill="none" stroke="#d99079" stroke-width="1.4"/><path d="M513.93,1779.0 L513.93,1091.89 A3.9,3.9 0 0 1 521.73,1091.89 L521.73,1779.0 Z" fill="none" stroke="#d99079" stroke-width="1.4"/><path d="M521.30,1779.0 L521.30,1271.91 A3.9,3.9 0 0 1 529.10,1271.91 L529.10,1779.0 Z" fill="none" stroke="#d99079" stroke-width="1.4"/><path d="M528.66,1779.0 L528.66,1177.21 A3.9,3.9 0 0 1 536.46,1177.21 L536.46,1779.0 Z" fill="none" stroke="#d99079" stroke-width="1.4"/><path d="M536.03,1779.0 L536.03,1405.05 A3.9,3.9 0 0 1 543.83,1405.05 L543.83,1779.0 Z" fill="none" stroke="#d99079" stroke-width="1.4"/><path d="M543.40,1779.0 L543.40,1390.05 A3.9,3.9 0 0 1 551.20,1390.05 L551.20,1779.0 Z" fill="none" stroke="#d99079" stroke-width="1.4"/><path d="M550.76,1779.0 L550.76,1491.31 A3.9,3.9 0 0 1 558.56,1491.31 L558.56,1779.0 Z" fill="none" stroke="#d99079" stroke-width="1.4"/><path d="M558.13,1779.0 L558.13,1514.75 A3.9,3.9 0 0 1 565.93,1514.75 L565.93,1779.0 Z" fill="none" stroke="#d99079" stroke-width="1.4"/><path d="M565.49,1779.0 L565.49,1554.13 A3.9,3.9 0 0 1 573.29,1554.13 L573.29,1779.0 Z" fill="none" stroke="#d99079" stroke-width="1.4"/><path d="M572.86,1779.0 L572.86,1451.93 A3.9,3.9 0 0 1 580.66,1451.93 L580.66,1779.0 Z" fill="none" stroke="#d99079" stroke-width="1.4"/><path d="M580.23,1779.0 L580.23,1454.74 A3.9,3.9 0 0 1 588.03,1454.74 L588.03,1779.0 Z" fill="none" stroke="#d99079" stroke-width="1.4"/><path d="M587.59,1779.0 L587.59,1524.12 A3.9,3.9 0 0 1 595.39,1524.12 L595.39,1779.0 Z" fill="none" stroke="#d99079" stroke-width="1.4"/><path d="M594.96,1779.0 L594.96,1161.27 A3.9,3.9 0 0 1 602.76,1161.27 L602.76,1779.0 Z" fill="none" stroke="#d99079" stroke-width="1.4"/><path d="M602.32,1779.0 L602.32,1204.40 A3.9,3.9 0 0 1 610.12,1204.40 L610.12,1779.0 Z" fill="none" stroke="#d99079" stroke-width="1.4"/><path d="M609.69,1779.0 L609.69,1341.29 A3.9,3.9 0 0 1 617.49,1341.29 L617.49,1779.0 Z" fill="none" stroke="#d99079" stroke-width="1.4"/><path d="M617.06,1779.0 L617.06,1266.28 A3.9,3.9 0 0 1 624.86,1266.28 L624.86,1779.0 Z" fill="none" stroke="#d99079" stroke-width="1.4"/><path d="M624.42,1779.0 L624.42,1277.53 A3.9,3.9 0 0 1 632.22,1277.53 L632.22,1779.0 Z" fill="none" stroke="#d99079" stroke-width="1.4"/><path d="M631.79,1779.0 L631.79,1402.23 A3.9,3.9 0 0 1 639.59,1402.23 L639.59,1779.0 Z" fill="none" stroke="#d99079" stroke-width="1.4"/><path d="M639.15,1779.0 L639.15,1536.31 A3.9,3.9 0 0 1 646.95,1536.31 L646.95,1779.0 Z" fill="none" stroke="#d99079" stroke-width="1.4"/><path d="M646.52,1779.0 L646.52,1594.44 A3.9,3.9 0 0 1 654.32,1594.44 L654.32,1779.0 Z" fill="none" stroke="#d99079" stroke-width="1.4"/><path d="M653.89,1779.0 L653.89,1579.44 A3.9,3.9 0 0 1 661.69,1579.44 L661.69,1779.0 Z" fill="none" stroke="#d99079" stroke-width="1.4"/><path d="M661.25,1779.0 L661.25,1411.61 A3.9,3.9 0 0 1 669.05,1411.61 L669.05,1779.0 Z" fill="none" stroke="#d99079" stroke-width="1.4"/><path d="M668.62,1779.0 L668.62,1491.31 A3.9,3.9 0 0 1 676.42,1491.31 L676.42,1779.0 Z" fill="none" stroke="#d99079" stroke-width="1.4"/><path d="M675.98,1779.0 L675.98,1394.73 A3.9,3.9 0 0 1 683.78,1394.73 L683.78,1779.0 Z" fill="none" stroke="#d99079" stroke-width="1.4"/><path d="M683.35,1779.0 L683.35,1200.65 A3.9,3.9 0 0 1 691.15,1200.65 L691.15,1779.0 Z" fill="none" stroke="#d99079" stroke-width="1.4"/><path d="M690.72,1779.0 L690.72,1276.60 A3.9,3.9 0 0 1 698.52,1276.60 L698.52,1779.0 Z" fill="none" stroke="#d99079" stroke-width="1.4"/><path d="M698.08,1779.0 L698.08,1233.47 A3.9,3.9 0 0 1 705.88,1233.47 L705.88,1779.0 Z" fill="none" stroke="#d99079" stroke-width="1.4"/><path d="M705.45,1779.0 L705.45,1135.96 A3.9,3.9 0 0 1 713.25,1135.96 L713.25,1779.0 Z" fill="none" stroke="#d99079" stroke-width="1.4"/><path d="M712.81,1779.0 L712.81,1246.59 A3.9,3.9 0 0 1 720.61,1246.59 L720.61,1779.0 Z" fill="none" stroke="#d99079" stroke-width="1.4"/><path d="M720.18,1779.0 L720.18,1153.77 A3.9,3.9 0 0 1 727.98,1153.77 L727.98,1779.0 Z" fill="none" stroke="#d99079" stroke-width="1.4"/><path d="M727.55,1779.0 L727.55,1481.93 A3.9,3.9 0 0 1 735.35,1481.93 L735.35,1779.0 Z" fill="none" stroke="#d99079" stroke-width="1.4"/><path d="M734.91,1779.0 L734.91,1509.12 A3.9,3.9 0 0 1 742.71,1509.12 L742.71,1779.0 Z" fill="none" stroke="#d99079" stroke-width="1.4"/><path d="M742.28,1779.0 L742.28,1458.49 A3.9,3.9 0 0 1 750.08,1458.49 L750.08,1779.0 Z" fill="none" stroke="#d99079" stroke-width="1.4"/><path d="M749.64,1779.0 L749.64,1521.31 A3.9,3.9 0 0 1 757.44,1521.31 L757.44,1779.0 Z" fill="none" stroke="#d99079" stroke-width="1.4"/><path d="M757.01,1779.0 L757.01,1481.93 A3.9,3.9 0 0 1 764.81,1481.93 L764.81,1779.0 Z" fill="none" stroke="#d99079" stroke-width="1.4"/><path d="M764.38,1779.0 L764.38,1272.85 A3.9,3.9 0 0 1 772.18,1272.85 L772.18,1779.0 Z" fill="none" stroke="#d99079" stroke-width="1.4"/><path d="M771.74,1779.0 L771.74,1273.78 A3.9,3.9 0 0 1 779.54,1273.78 L779.54,1779.0 Z" fill="none" stroke="#d99079" stroke-width="1.4"/><path d="M779.11,1779.0 L779.11,1306.60 A3.9,3.9 0 0 1 786.91,1306.60 L786.91,1779.0 Z" fill="none" stroke="#d99079" stroke-width="1.4"/><path d="M786.47,1779.0 L786.47,1196.90 A3.9,3.9 0 0 1 794.27,1196.90 L794.27,1779.0 Z" fill="none" stroke="#d99079" stroke-width="1.4"/><path d="M793.84,1779.0 L793.84,1288.78 A3.9,3.9 0 0 1 801.64,1288.78 L801.64,1779.0 Z" fill="none" stroke="#d99079" stroke-width="1.4"/><path d="M801.21,1779.0 L801.21,1379.73 A3.9,3.9 0 0 1 809.01,1379.73 L809.01,1779.0 Z" fill="none" stroke="#d99079" stroke-width="1.4"/><path d="M808.57,1779.0 L808.57,1280.35 A3.9,3.9 0 0 1 816.37,1280.35 L816.37,1779.0 Z" fill="none" stroke="#d99079" stroke-width="1.4"/><path d="M815.94,1779.0 L815.94,1262.53 A3.9,3.9 0 0 1 823.74,1262.53 L823.74,1779.0 Z" fill="none" stroke="#d99079" stroke-width="1.4"/><path d="M823.30,1779.0 L823.30,1480.06 A3.9,3.9 0 0 1 831.10,1480.06 L831.10,1779.0 Z" fill="none" stroke="#d99079" stroke-width="1.4"/><path d="M830.67,1779.0 L830.67,1505.37 A3.9,3.9 0 0 1 838.47,1505.37 L838.47,1779.0 Z" fill="none" stroke="#d99079" stroke-width="1.4"/><path d="M838.04,1779.0 L838.04,1557.88 A3.9,3.9 0 0 1 845.84,1557.88 L845.84,1779.0 Z" fill="none" stroke="#d99079" stroke-width="1.4"/><path d="M845.40,1779.0 L845.40,1528.81 A3.9,3.9 0 0 1 853.20,1528.81 L853.20,1779.0 Z" fill="none" stroke="#d99079" stroke-width="1.4"/><path d="M852.77,1779.0 L852.77,1507.25 A3.9,3.9 0 0 1 860.57,1507.25 L860.57,1779.0 Z" fill="none" stroke="#d99079" stroke-width="1.4"/><path d="M860.13,1779.0 L860.13,1305.66 A3.9,3.9 0 0 1 867.93,1305.66 L867.93,1779.0 Z" fill="none" stroke="#d99079" stroke-width="1.4"/><path d="M867.50,1779.0 L867.50,1243.78 A3.9,3.9 0 0 1 875.30,1243.78 L875.30,1779.0 Z" fill="none" stroke="#d99079" stroke-width="1.4"/><path d="M874.87,1779.0 L874.87,1270.03 A3.9,3.9 0 0 1 882.67,1270.03 L882.67,1779.0 Z" fill="none" stroke="#d99079" stroke-width="1.4"/><path d="M882.23,1779.0 L882.23,1319.73 A3.9,3.9 0 0 1 890.03,1319.73 L890.03,1779.0 Z" fill="none" stroke="#d99079" stroke-width="1.4"/><path d="M889.60,1779.0 L889.60,1386.30 A3.9,3.9 0 0 1 897.40,1386.30 L897.40,1779.0 Z" fill="none" stroke="#d99079" stroke-width="1.4"/><path d="M896.96,1779.0 L896.96,1390.98 A3.9,3.9 0 0 1 904.76,1390.98 L904.76,1779.0 Z" fill="none" stroke="#d99079" stroke-width="1.4"/><path d="M904.33,1779.0 L904.33,1196.90 A3.9,3.9 0 0 1 912.13,1196.90 L912.13,1779.0 Z" fill="none" stroke="#d99079" stroke-width="1.4"/><path d="M911.70,1779.0 L911.70,926.87 A3.9,3.9 0 0 1 919.50,926.87 L919.50,1779.0 Z" fill="none" stroke="#d99079" stroke-width="1.4"/><path d="M919.06,1779.0 L919.06,1190.34 A3.9,3.9 0 0 1 926.86,1190.34 L926.86,1779.0 Z" fill="none" stroke="#d99079" stroke-width="1.4"/><path d="M926.43,1779.0 L926.43,1512.87 A3.9,3.9 0 0 1 934.23,1512.87 L934.23,1779.0 Z" fill="none" stroke="#d99079" stroke-width="1.4"/><path d="M933.79,1779.0 L933.79,1383.48 A3.9,3.9 0 0 1 941.59,1383.48 L941.59,1779.0 Z" fill="none" stroke="#d99079" stroke-width="1.4"/><path d="M941.16,1779.0 L941.16,1426.61 A3.9,3.9 0 0 1 948.96,1426.61 L948.96,1779.0 Z" fill="none" stroke="#d99079" stroke-width="1.4"/><path d="M948.53,1779.0 L948.53,1375.98 A3.9,3.9 0 0 1 956.33,1375.98 L956.33,1779.0 Z" fill="none" stroke="#d99079" stroke-width="1.4"/><path d="M955.89,1779.0 L955.89,1287.85 A3.9,3.9 0 0 1 963.69,1287.85 L963.69,1779.0 Z" fill="none" stroke="#d99079" stroke-width="1.4"/><path d="M963.26,1779.0 L963.26,1268.16 A3.9,3.9 0 0 1 971.06,1268.16 L971.06,1779.0 Z" fill="none" stroke="#d99079" stroke-width="1.4"/><path d="M970.62,1779.0 L970.62,902.49 A3.9,3.9 0 0 1 978.42,902.49 L978.42,1779.0 Z" fill="none" stroke="#d99079" stroke-width="1.4"/><path d="M977.99,1779.0 L977.99,1276.60 A3.9,3.9 0 0 1 985.79,1276.60 L985.79,1779.0 Z" fill="none" stroke="#d99079" stroke-width="1.4"/><path d="M985.36,1779.0 L985.36,1285.03 A3.9,3.9 0 0 1 993.16,1285.03 L993.16,1779.0 Z" fill="none" stroke="#d99079" stroke-width="1.4"/><path d="M992.72,1779.0 L992.72,1094.70 A3.9,3.9 0 0 1 1000.52,1094.70 L1000.52,1779.0 Z" fill="none" stroke="#d99079" stroke-width="1.4"/><path d="M1000.09,1779.0 L1000.09,1197.84 A3.9,3.9 0 0 1 1007.89,1197.84 L1007.89,1779.0 Z" fill="none" stroke="#d99079" stroke-width="1.4"/><path d="M1007.45,1779.0 L1007.45,1306.60 A3.9,3.9 0 0 1 1015.25,1306.60 L1015.25,1779.0 Z" fill="none" stroke="#d99079" stroke-width="1.4"/><path d="M1014.82,1779.0 L1014.82,1075.01 A3.9,3.9 0 0 1 1022.62,1075.01 L1022.62,1779.0 Z" fill="none" stroke="#d99079" stroke-width="1.4"/><path d="M1022.19,1779.0 L1022.19,1114.39 A3.9,3.9 0 0 1 1029.99,1114.39 L1029.99,1779.0 Z" fill="none" stroke="#d99079" stroke-width="1.4"/><path d="M1029.55,1779.0 L1029.55,1305.66 A3.9,3.9 0 0 1 1037.35,1305.66 L1037.35,1779.0 Z" fill="none" stroke="#d99079" stroke-width="1.4"/><path d="M1036.92,1779.0 L1036.92,1393.80 A3.9,3.9 0 0 1 1044.72,1393.80 L1044.72,1779.0 Z" fill="none" stroke="#d99079" stroke-width="1.4"/><path d="M1044.28,1779.0 L1044.28,1323.48 A3.9,3.9 0 0 1 1052.08,1323.48 L1052.08,1779.0 Z" fill="none" stroke="#d99079" stroke-width="1.4"/><path d="M1051.65,1779.0 L1051.65,1287.85 A3.9,3.9 0 0 1 1059.45,1287.85 L1059.45,1779.0 Z" fill="none" stroke="#d99079" stroke-width="1.4"/><path d="M1059.02,1779.0 L1059.02,1135.96 A3.9,3.9 0 0 1 1066.82,1135.96 L1066.82,1779.0 Z" fill="none" stroke="#d99079" stroke-width="1.4"/><path d="M1066.38,1779.0 L1066.38,1197.84 A3.9,3.9 0 0 1 1074.18,1197.84 L1074.18,1779.0 Z" fill="none" stroke="#d99079" stroke-width="1.4"/><path d="M1073.75,1779.0 L1073.75,1027.19 A3.9,3.9 0 0 1 1081.55,1027.19 L1081.55,1779.0 Z" fill="none" stroke="#d99079" stroke-width="1.4"/><path d="M1081.11,1779.0 L1081.11,1338.48 A3.9,3.9 0 0 1 1088.91,1338.48 L1088.91,1779.0 Z" fill="none" stroke="#d99079" stroke-width="1.4"/><path d="M1088.48,1779.0 L1088.48,1143.46 A3.9,3.9 0 0 1 1096.28,1143.46 L1096.28,1779.0 Z" fill="none" stroke="#d99079" stroke-width="1.4"/><path d="M1095.85,1779.0 L1095.85,1327.23 A3.9,3.9 0 0 1 1103.65,1327.23 L1103.65,1779.0 Z" fill="none" stroke="#d99079" stroke-width="1.4"/><path d="M1103.21,1779.0 L1103.21,1291.60 A3.9,3.9 0 0 1 1111.01,1291.60 L1111.01,1779.0 Z" fill="none" stroke="#d99079" stroke-width="1.4"/><path d="M1110.58,1779.0 L1110.58,1363.79 A3.9,3.9 0 0 1 1118.38,1363.79 L1118.38,1779.0 Z" fill="none" stroke="#d99079" stroke-width="1.4"/><path d="M1117.94,1779.0 L1117.94,1309.41 A3.9,3.9 0 0 1 1125.74,1309.41 L1125.74,1779.0 Z" fill="none" stroke="#d99079" stroke-width="1.4"/><path d="M1125.31,1779.0 L1125.31,1219.40 A3.9,3.9 0 0 1 1133.11,1219.40 L1133.11,1779.0 Z" fill="none" stroke="#d99079" stroke-width="1.4"/><path d="M1132.68,1779.0 L1132.68,1357.23 A3.9,3.9 0 0 1 1140.48,1357.23 L1140.48,1779.0 Z" fill="none" stroke="#d99079" stroke-width="1.4"/><path d="M1140.04,1779.0 L1140.04,1423.80 A3.9,3.9 0 0 1 1147.84,1423.80 L1147.84,1779.0 Z" fill="none" stroke="#d99079" stroke-width="1.4"/><path d="M1147.41,1779.0 L1147.41,1407.86 A3.9,3.9 0 0 1 1155.21,1407.86 L1155.21,1779.0 Z" fill="none" stroke="#d99079" stroke-width="1.4"/><path d="M1154.77,1779.0 L1154.77,1400.36 A3.9,3.9 0 0 1 1162.57,1400.36 L1162.57,1779.0 Z" fill="none" stroke="#d99079" stroke-width="1.4"/><path d="M1162.14,1779.0 L1162.14,1429.42 A3.9,3.9 0 0 1 1169.94,1429.42 L1169.94,1779.0 Z" fill="none" stroke="#d99079" stroke-width="1.4"/><path d="M1169.51,1779.0 L1169.51,1140.64 A3.9,3.9 0 0 1 1177.31,1140.64 L1177.31,1779.0 Z" fill="none" stroke="#d99079" stroke-width="1.4"/><path d="M1176.87,1779.0 L1176.87,1090.95 A3.9,3.9 0 0 1 1184.67,1090.95 L1184.67,1779.0 Z" fill="none" stroke="#d99079" stroke-width="1.4"/><path d="M1184.24,1779.0 L1184.24,1312.22 A3.9,3.9 0 0 1 1192.04,1312.22 L1192.04,1779.0 Z" fill="none" stroke="#d99079" stroke-width="1.4"/><path d="M1191.60,1779.0 L1191.60,1298.16 A3.9,3.9 0 0 1 1199.40,1298.16 L1199.40,1779.0 Z" fill="none" stroke="#d99079" stroke-width="1.4"/><path d="M1198.97,1779.0 L1198.97,1320.66 A3.9,3.9 0 0 1 1206.77,1320.66 L1206.77,1779.0 Z" fill="none" stroke="#d99079" stroke-width="1.4"/><path d="M1206.34,1779.0 L1206.34,1204.40 A3.9,3.9 0 0 1 1214.14,1204.40 L1214.14,1779.0 Z" fill="none" stroke="#d99079" stroke-width="1.4"/><path d="M1213.70,1779.0 L1213.70,1154.71 A3.9,3.9 0 0 1 1221.50,1154.71 L1221.50,1779.0 Z" fill="none" stroke="#d99079" stroke-width="1.4"/><path d="M1221.07,1779.0 L1221.07,1194.09 A3.9,3.9 0 0 1 1228.87,1194.09 L1228.87,1779.0 Z" fill="none" stroke="#d99079" stroke-width="1.4"/><path d="M1228.43,1779.0 L1228.43,1048.76 A3.9,3.9 0 0 1 1236.23,1048.76 L1236.23,1779.0 Z" fill="none" stroke="#d99079" stroke-width="1.4"/><path d="M1235.80,1779.0 L1235.80,1254.09 A3.9,3.9 0 0 1 1243.60,1254.09 L1243.60,1779.0 Z" fill="none" stroke="#d99079" stroke-width="1.4"/><path d="M1243.17,1779.0 L1243.17,1204.40 A3.9,3.9 0 0 1 1250.97,1204.40 L1250.97,1779.0 Z" fill="none" stroke="#d99079" stroke-width="1.4"/><path d="M1250.53,1779.0 L1250.53,1287.85 A3.9,3.9 0 0 1 1258.33,1287.85 L1258.33,1779.0 Z" fill="none" stroke="#d99079" stroke-width="1.4"/><path d="M1257.90,1779.0 L1257.90,1299.10 A3.9,3.9 0 0 1 1265.70,1299.10 L1265.70,1779.0 Z" fill="none" stroke="#d99079" stroke-width="1.4"/><path d="M1265.26,1779.0 L1265.26,1246.59 A3.9,3.9 0 0 1 1273.06,1246.59 L1273.06,1779.0 Z" fill="none" stroke="#d99079" stroke-width="1.4"/><path d="M1272.63,1779.0 L1272.63,1187.52 A3.9,3.9 0 0 1 1280.43,1187.52 L1280.43,1779.0 Z" fill="none" stroke="#d99079" stroke-width="1.4"/><path d="M1280.00,1779.0 L1280.00,1007.50 A3.9,3.9 0 0 1 1287.80,1007.50 L1287.80,1779.0 Z" fill="none" stroke="#d99079" stroke-width="1.4"/><path d="M1287.36,1779.0 L1287.36,1048.76 A3.9,3.9 0 0 1 1295.16,1048.76 L1295.16,1779.0 Z" fill="none" stroke="#d99079" stroke-width="1.4"/><path d="M1294.73,1779.0 L1294.73,1212.84 A3.9,3.9 0 0 1 1302.53,1212.84 L1302.53,1779.0 Z" fill="none" stroke="#d99079" stroke-width="1.4"/><path d="M1302.09,1779.0 L1302.09,1162.21 A3.9,3.9 0 0 1 1309.89,1162.21 L1309.89,1779.0 Z" fill="none" stroke="#d99079" stroke-width="1.4"/><path d="M1309.46,1779.0 L1309.46,1109.70 A3.9,3.9 0 0 1 1317.26,1109.70 L1317.26,1779.0 Z" fill="none" stroke="#d99079" stroke-width="1.4"/><path d="M1316.83,1779.0 L1316.83,1175.34 A3.9,3.9 0 0 1 1324.63,1175.34 L1324.63,1779.0 Z" fill="none" stroke="#d99079" stroke-width="1.4"/><path d="M1324.19,1779.0 L1324.19,1116.27 A3.9,3.9 0 0 1 1331.99,1116.27 L1331.99,1779.0 Z" fill="none" stroke="#d99079" stroke-width="1.4"/><path d="M1331.56,1779.0 L1331.56,1144.39 A3.9,3.9 0 0 1 1339.36,1144.39 L1339.36,1779.0 Z" fill="none" stroke="#d99079" stroke-width="1.4"/><path d="M1338.92,1779.0 L1338.92,1302.85 A3.9,3.9 0 0 1 1346.72,1302.85 L1346.72,1779.0 Z" fill="none" stroke="#d99079" stroke-width="1.4"/><path d="M1346.29,1779.0 L1346.29,1281.28 A3.9,3.9 0 0 1 1354.09,1281.28 L1354.09,1779.0 Z" fill="none" stroke="#d99079" stroke-width="1.4"/><path d="M1353.66,1779.0 L1353.66,1107.83 A3.9,3.9 0 0 1 1361.46,1107.83 L1361.46,1779.0 Z" fill="none" stroke="#d99079" stroke-width="1.4"/><path d="M1361.02,1779.0 L1361.02,1073.14 A3.9,3.9 0 0 1 1368.82,1073.14 L1368.82,1779.0 Z" fill="none" stroke="#d99079" stroke-width="1.4"/><path d="M1368.39,1779.0 L1368.39,1105.95 A3.9,3.9 0 0 1 1376.19,1105.95 L1376.19,1779.0 Z" fill="none" stroke="#d99079" stroke-width="1.4"/><path d="M1375.75,1779.0 L1375.75,1014.07 A3.9,3.9 0 0 1 1383.55,1014.07 L1383.55,1779.0 Z" fill="none" stroke="#d99079" stroke-width="1.4"/><path d="M1383.12,1779.0 L1383.12,1012.19 A3.9,3.9 0 0 1 1390.92,1012.19 L1390.92,1779.0 Z" fill="none" stroke="#d99079" stroke-width="1.4"/><path d="M1390.49,1779.0 L1390.49,1139.71 A3.9,3.9 0 0 1 1398.29,1139.71 L1398.29,1779.0 Z" fill="none" stroke="#d99079" stroke-width="1.4"/><path d="M1397.85,1779.0 L1397.85,1087.20 A3.9,3.9 0 0 1 1405.65,1087.20 L1405.65,1779.0 Z" fill="none" stroke="#d99079" stroke-width="1.4"/><path d="M1405.22,1779.0 L1405.22,1118.14 A3.9,3.9 0 0 1 1413.02,1118.14 L1413.02,1779.0 Z" fill="none" stroke="#d99079" stroke-width="1.4"/><path d="M1412.58,1779.0 L1412.58,1076.89 A3.9,3.9 0 0 1 1420.38,1076.89 L1420.38,1779.0 Z" fill="none" stroke="#d99079" stroke-width="1.4"/><path d="M1419.95,1779.0 L1419.95,969.06 A3.9,3.9 0 0 1 1427.75,969.06 L1427.75,1779.0 Z" fill="none" stroke="#d99079" stroke-width="1.4"/><path d="M1427.32,1779.0 L1427.32,1225.03 A3.9,3.9 0 0 1 1435.12,1225.03 L1435.12,1779.0 Z" fill="none" stroke="#d99079" stroke-width="1.4"/><path d="M1434.68,1779.0 L1434.68,1076.89 A3.9,3.9 0 0 1 1442.48,1076.89 L1442.48,1779.0 Z" fill="none" stroke="#d99079" stroke-width="1.4"/><path d="M1442.05,1779.0 L1442.05,1287.85 A3.9,3.9 0 0 1 1449.85,1287.85 L1449.85,1779.0 Z" fill="none" stroke="#d99079" stroke-width="1.4"/><path d="M1449.41,1779.0 L1449.41,1200.65 A3.9,3.9 0 0 1 1457.21,1200.65 L1457.21,1779.0 Z" fill="none" stroke="#d99079" stroke-width="1.4"/><path d="M1456.78,1779.0 L1456.78,1210.03 A3.9,3.9 0 0 1 1464.58,1210.03 L1464.58,1779.0 Z" fill="none" stroke="#d99079" stroke-width="1.4"/><path d="M1464.15,1779.0 L1464.15,1172.52 A3.9,3.9 0 0 1 1471.95,1172.52 L1471.95,1779.0 Z" fill="none" stroke="#d99079" stroke-width="1.4"/><path d="M1471.51,1779.0 L1471.51,945.62 A3.9,3.9 0 0 1 1479.31,945.62 L1479.31,1779.0 Z" fill="none" stroke="#d99079" stroke-width="1.4"/><path d="M1478.88,1779.0 L1478.88,1123.77 A3.9,3.9 0 0 1 1486.68,1123.77 L1486.68,1779.0 Z" fill="none" stroke="#d99079" stroke-width="1.4"/><path d="M1486.24,1779.0 L1486.24,849.99 A3.9,3.9 0 0 1 1494.04,849.99 L1494.04,1779.0 Z" fill="none" stroke="#d99079" stroke-width="1.4"/><path d="M1493.61,1779.0 L1493.61,944.69 A3.9,3.9 0 0 1 1501.41,944.69 L1501.41,1779.0 Z" fill="none" stroke="#d99079" stroke-width="1.4"/><path d="M1500.98,1779.0 L1500.98,1001.88 A3.9,3.9 0 0 1 1508.78,1001.88 L1508.78,1779.0 Z" fill="none" stroke="#d99079" stroke-width="1.4"/><path d="M1508.34,1779.0 L1508.34,1125.64 A3.9,3.9 0 0 1 1516.14,1125.64 L1516.14,1779.0 Z" fill="none" stroke="#d99079" stroke-width="1.4"/><path d="M1515.71,1779.0 L1515.71,1069.39 A3.9,3.9 0 0 1 1523.51,1069.39 L1523.51,1779.0 Z" fill="none" stroke="#d99079" stroke-width="1.4"/><path d="M1523.07,1779.0 L1523.07,961.56 A3.9,3.9 0 0 1 1530.87,961.56 L1530.87,1779.0 Z" fill="none" stroke="#d99079" stroke-width="1.4"/><path d="M1530.44,1779.0 L1530.44,975.63 A3.9,3.9 0 0 1 1538.24,975.63 L1538.24,1779.0 Z" fill="none" stroke="#d99079" stroke-width="1.4"/><path d="M1537.81,1779.0 L1537.81,1179.09 A3.9,3.9 0 0 1 1545.61,1179.09 L1545.61,1779.0 Z" fill="none" stroke="#d99079" stroke-width="1.4"/><path d="M1545.17,1779.0 L1545.17,1193.15 A3.9,3.9 0 0 1 1552.97,1193.15 L1552.97,1779.0 Z" fill="none" stroke="#d99079" stroke-width="1.4"/><path d="M1552.54,1779.0 L1552.54,1240.97 A3.9,3.9 0 0 1 1560.34,1240.97 L1560.34,1779.0 Z" fill="none" stroke="#d99079" stroke-width="1.4"/><path d="M1559.90,1779.0 L1559.90,1224.09 A3.9,3.9 0 0 1 1567.70,1224.09 L1567.70,1779.0 Z" fill="none" stroke="#d99079" stroke-width="1.4"/><path d="M1567.27,1779.0 L1567.27,1055.32 A3.9,3.9 0 0 1 1575.07,1055.32 L1575.07,1779.0 Z" fill="none" stroke="#d99079" stroke-width="1.4"/><path d="M1574.64,1779.0 L1574.64,1161.27 A3.9,3.9 0 0 1 1582.44,1161.27 L1582.44,1779.0 Z" fill="none" stroke="#d99079" stroke-width="1.4"/><path d="M1582.00,1779.0 L1582.00,1165.02 A3.9,3.9 0 0 1 1589.80,1165.02 L1589.80,1779.0 Z" fill="none" stroke="#d99079" stroke-width="1.4"/><path d="M1589.37,1779.0 L1589.37,1050.63 A3.9,3.9 0 0 1 1597.17,1050.63 L1597.17,1779.0 Z" fill="none" stroke="#d99079" stroke-width="1.4"/><path d="M1596.73,1779.0 L1596.73,979.38 A3.9,3.9 0 0 1 1604.53,979.38 L1604.53,1779.0 Z" fill="none" stroke="#d99079" stroke-width="1.4"/><path d="M1604.10,1779.0 L1604.10,954.06 A3.9,3.9 0 0 1 1611.90,954.06 L1611.90,1779.0 Z" fill="none" stroke="#d99079" stroke-width="1.4"/><path d="M1611.47,1779.0 L1611.47,1098.45 A3.9,3.9 0 0 1 1619.27,1098.45 L1619.27,1779.0 Z" fill="none" stroke="#d99079" stroke-width="1.4"/><path d="M1618.83,1779.0 L1618.83,1196.90 A3.9,3.9 0 0 1 1626.63,1196.90 L1626.63,1779.0 Z" fill="none" stroke="#d99079" stroke-width="1.4"/><path d="M1626.20,1779.0 L1626.20,1150.02 A3.9,3.9 0 0 1 1634.00,1150.02 L1634.00,1779.0 Z" fill="none" stroke="#d99079" stroke-width="1.4"/><path d="M1633.56,1779.0 L1633.56,982.19 A3.9,3.9 0 0 1 1641.36,982.19 L1641.36,1779.0 Z" fill="none" stroke="#d99079" stroke-width="1.4"/><path d="M1640.93,1779.0 L1640.93,1004.69 A3.9,3.9 0 0 1 1648.73,1004.69 L1648.73,1779.0 Z" fill="none" stroke="#d99079" stroke-width="1.4"/><path d="M1648.30,1779.0 L1648.30,1237.22 A3.9,3.9 0 0 1 1656.10,1237.22 L1656.10,1779.0 Z" fill="none" stroke="#d99079" stroke-width="1.4"/><path d="M1655.66,1779.0 L1655.66,1276.60 A3.9,3.9 0 0 1 1663.46,1276.60 L1663.46,1779.0 Z" fill="none" stroke="#d99079" stroke-width="1.4"/><path d="M1663.03,1779.0 L1663.03,1240.03 A3.9,3.9 0 0 1 1670.83,1240.03 L1670.83,1779.0 Z" fill="none" stroke="#d99079" stroke-width="1.4"/><path d="M1670.39,1779.0 L1670.39,1180.96 A3.9,3.9 0 0 1 1678.19,1180.96 L1678.19,1779.0 Z" fill="none" stroke="#d99079" stroke-width="1.4"/><path d="M1677.76,1779.0 L1677.76,1232.53 A3.9,3.9 0 0 1 1685.56,1232.53 L1685.56,1779.0 Z" fill="none" stroke="#d99079" stroke-width="1.4"/><path d="M1685.13,1779.0 L1685.13,1000.00 A3.9,3.9 0 0 1 1692.93,1000.00 L1692.93,1779.0 Z" fill="none" stroke="#d99079" stroke-width="1.4"/><path d="M1692.49,1779.0 L1692.49,1148.14 A3.9,3.9 0 0 1 1700.29,1148.14 L1700.29,1779.0 Z" fill="none" stroke="#d99079" stroke-width="1.4"/><path d="M1699.86,1779.0 L1699.86,1291.60 A3.9,3.9 0 0 1 1707.66,1291.60 L1707.66,1779.0 Z" fill="none" stroke="#d99079" stroke-width="1.4"/><path d="M1707.22,1779.0 L1707.22,1186.59 A3.9,3.9 0 0 1 1715.02,1186.59 L1715.02,1779.0 Z" fill="none" stroke="#d99079" stroke-width="1.4"/><path d="M1714.59,1779.0 L1714.59,1251.28 A3.9,3.9 0 0 1 1722.39,1251.28 L1722.39,1779.0 Z" fill="none" stroke="#d99079" stroke-width="1.4"/><path d="M1721.96,1779.0 L1721.96,1301.91 A3.9,3.9 0 0 1 1729.76,1301.91 L1729.76,1779.0 Z" fill="none" stroke="#d99079" stroke-width="1.4"/><path d="M1729.32,1779.0 L1729.32,1239.09 A3.9,3.9 0 0 1 1737.12,1239.09 L1737.12,1779.0 Z" fill="none" stroke="#d99079" stroke-width="1.4"/><path d="M1736.69,1779.0 L1736.69,1216.59 A3.9,3.9 0 0 1 1744.49,1216.59 L1744.49,1779.0 Z" fill="none" stroke="#d99079" stroke-width="1.4"/><path d="M1744.05,1779.0 L1744.05,1247.53 A3.9,3.9 0 0 1 1751.85,1247.53 L1751.85,1779.0 Z" fill="none" stroke="#d99079" stroke-width="1.4"/><path d="M1751.42,1779.0 L1751.42,1372.23 A3.9,3.9 0 0 1 1759.22,1372.23 L1759.22,1779.0 Z" fill="none" stroke="#d99079" stroke-width="1.4"/><path d="M1758.79,1779.0 L1758.79,1285.03 A3.9,3.9 0 0 1 1766.59,1285.03 L1766.59,1779.0 Z" fill="none" stroke="#d99079" stroke-width="1.4"/><path d="M1766.15,1779.0 L1766.15,1300.97 A3.9,3.9 0 0 1 1773.95,1300.97 L1773.95,1779.0 Z" fill="none" stroke="#d99079" stroke-width="1.4"/><path d="M1773.52,1779.0 L1773.52,1225.97 A3.9,3.9 0 0 1 1781.32,1225.97 L1781.32,1779.0 Z" fill="none" stroke="#d99079" stroke-width="1.4"/><path d="M1780.88,1779.0 L1780.88,1375.98 A3.9,3.9 0 0 1 1788.68,1375.98 L1788.68,1779.0 Z" fill="none" stroke="#d99079" stroke-width="1.4"/><path d="M1788.25,1779.0 L1788.25,1169.71 A3.9,3.9 0 0 1 1796.05,1169.71 L1796.05,1779.0 Z" fill="none" stroke="#d99079" stroke-width="1.4"/><path d="M1795.62,1779.0 L1795.62,1135.02 A3.9,3.9 0 0 1 1803.42,1135.02 L1803.42,1779.0 Z" fill="none" stroke="#d99079" stroke-width="1.4"/><path d="M1802.98,1779.0 L1802.98,1394.73 A3.9,3.9 0 0 1 1810.78,1394.73 L1810.78,1779.0 Z" fill="none" stroke="#d99079" stroke-width="1.4"/><path d="M1810.35,1779.0 L1810.35,1179.09 A3.9,3.9 0 0 1 1818.15,1179.09 L1818.15,1779.0 Z" fill="none" stroke="#d99079" stroke-width="1.4"/><path d="M1817.71,1779.0 L1817.71,1051.57 A3.9,3.9 0 0 1 1825.51,1051.57 L1825.51,1779.0 Z" fill="none" stroke="#d99079" stroke-width="1.4"/><path d="M1825.08,1779.0 L1825.08,1410.67 A3.9,3.9 0 0 1 1832.88,1410.67 L1832.88,1779.0 Z" fill="none" stroke="#d99079" stroke-width="1.4"/><path d="M1832.45,1779.0 L1832.45,1364.73 A3.9,3.9 0 0 1 1840.25,1364.73 L1840.25,1779.0 Z" fill="none" stroke="#d99079" stroke-width="1.4"/><path d="M1839.81,1779.0 L1839.81,1352.54 A3.9,3.9 0 0 1 1847.61,1352.54 L1847.61,1779.0 Z" fill="none" stroke="#d99079" stroke-width="1.4"/><path d="M1847.18,1779.0 L1847.18,1284.10 A3.9,3.9 0 0 1 1854.98,1284.10 L1854.98,1779.0 Z" fill="none" stroke="#d99079" stroke-width="1.4"/><path d="M1854.54,1779.0 L1854.54,1213.78 A3.9,3.9 0 0 1 1862.34,1213.78 L1862.34,1779.0 Z" fill="none" stroke="#d99079" stroke-width="1.4"/><path d="M1861.91,1779.0 L1861.91,1114.39 A3.9,3.9 0 0 1 1869.71,1114.39 L1869.71,1779.0 Z" fill="none" stroke="#d99079" stroke-width="1.4"/><path d="M1869.28,1779.0 L1869.28,1148.14 A3.9,3.9 0 0 1 1877.08,1148.14 L1877.08,1779.0 Z" fill="none" stroke="#d99079" stroke-width="1.4"/><path d="M1876.64,1779.0 L1876.64,1153.77 A3.9,3.9 0 0 1 1884.44,1153.77 L1884.44,1779.0 Z" fill="none" stroke="#d99079" stroke-width="1.4"/><path d="M1884.01,1779.0 L1884.01,1277.53 A3.9,3.9 0 0 1 1891.81,1277.53 L1891.81,1779.0 Z" fill="none" stroke="#d99079" stroke-width="1.4"/><path d="M1891.37,1779.0 L1891.37,1142.52 A3.9,3.9 0 0 1 1899.17,1142.52 L1899.17,1779.0 Z" fill="none" stroke="#d99079" stroke-width="1.4"/><path d="M1898.74,1779.0 L1898.74,1034.70 A3.9,3.9 0 0 1 1906.54,1034.70 L1906.54,1779.0 Z" fill="none" stroke="#d99079" stroke-width="1.4"/><path d="M1906.11,1779.0 L1906.11,1105.95 A3.9,3.9 0 0 1 1913.91,1105.95 L1913.91,1779.0 Z" fill="none" stroke="#d99079" stroke-width="1.4"/><path d="M1913.47,1779.0 L1913.47,1015.94 A3.9,3.9 0 0 1 1921.27,1015.94 L1921.27,1779.0 Z" fill="none" stroke="#d99079" stroke-width="1.4"/><path d="M1920.84,1779.0 L1920.84,1087.20 A3.9,3.9 0 0 1 1928.64,1087.20 L1928.64,1779.0 Z" fill="none" stroke="#d99079" stroke-width="1.4"/><path d="M1928.20,1779.0 L1928.20,1227.84 A3.9,3.9 0 0 1 1936.00,1227.84 L1936.00,1779.0 Z" fill="none" stroke="#d99079" stroke-width="1.4"/><path d="M1935.57,1779.0 L1935.57,1227.84 A3.9,3.9 0 0 1 1943.37,1227.84 L1943.37,1779.0 Z" fill="none" stroke="#d99079" stroke-width="1.4"/><path d="M1942.94,1779.0 L1942.94,1191.27 A3.9,3.9 0 0 1 1950.74,1191.27 L1950.74,1779.0 Z" fill="none" stroke="#d99079" stroke-width="1.4"/><path d="M1950.30,1779.0 L1950.30,1051.57 A3.9,3.9 0 0 1 1958.10,1051.57 L1958.10,1779.0 Z" fill="none" stroke="#d99079" stroke-width="1.4"/><path d="M1957.67,1779.0 L1957.67,1248.47 A3.9,3.9 0 0 1 1965.47,1248.47 L1965.47,1779.0 Z" fill="none" stroke="#d99079" stroke-width="1.4"/><path d="M1965.03,1779.0 L1965.03,1248.47 A3.9,3.9 0 0 1 1972.83,1248.47 L1972.83,1779.0 Z" fill="none" stroke="#d99079" stroke-width="1.4"/><path d="M1972.40,1779.0 L1972.40,1268.16 A3.9,3.9 0 0 1 1980.20,1268.16 L1980.20,1779.0 Z" fill="none" stroke="#d99079" stroke-width="1.4"/><path d="M1979.77,1779.0 L1979.77,1331.91 A3.9,3.9 0 0 1 1987.57,1331.91 L1987.57,1779.0 Z" fill="none" stroke="#d99079" stroke-width="1.4"/><path d="M1987.13,1779.0 L1987.13,1237.22 A3.9,3.9 0 0 1 1994.93,1237.22 L1994.93,1779.0 Z" fill="none" stroke="#d99079" stroke-width="1.4"/><path d="M1994.50,1779.0 L1994.50,1105.95 A3.9,3.9 0 0 1 2002.30,1105.95 L2002.30,1779.0 Z" fill="none" stroke="#d99079" stroke-width="1.4"/><path d="M2001.86,1779.0 L2001.86,1180.02 A3.9,3.9 0 0 1 2009.66,1180.02 L2009.66,1779.0 Z" fill="none" stroke="#d99079" stroke-width="1.4"/><path d="M2009.23,1779.0 L2009.23,1286.91 A3.9,3.9 0 0 1 2017.03,1286.91 L2017.03,1779.0 Z" fill="none" stroke="#d99079" stroke-width="1.4"/><path d="M2016.60,1779.0 L2016.60,1270.03 A3.9,3.9 0 0 1 2024.40,1270.03 L2024.40,1779.0 Z" fill="none" stroke="#d99079" stroke-width="1.4"/><path d="M2023.96,1779.0 L2023.96,1301.91 A3.9,3.9 0 0 1 2031.76,1301.91 L2031.76,1779.0 Z" fill="none" stroke="#d99079" stroke-width="1.4"/><path d="M2031.33,1779.0 L2031.33,1239.09 A3.9,3.9 0 0 1 2039.13,1239.09 L2039.13,1779.0 Z" fill="none" stroke="#d99079" stroke-width="1.4"/><path d="M2038.69,1779.0 L2038.69,1154.71 A3.9,3.9 0 0 1 2046.49,1154.71 L2046.49,1779.0 Z" fill="none" stroke="#d99079" stroke-width="1.4"/><path d="M2046.06,1779.0 L2046.06,1083.45 A3.9,3.9 0 0 1 2053.86,1083.45 L2053.86,1779.0 Z" fill="none" stroke="#d99079" stroke-width="1.4"/><path d="M2053.43,1779.0 L2053.43,1148.14 A3.9,3.9 0 0 1 2061.23,1148.14 L2061.23,1779.0 Z" fill="none" stroke="#d99079" stroke-width="1.4"/><path d="M2060.79,1779.0 L2060.79,1277.53 A3.9,3.9 0 0 1 2068.59,1277.53 L2068.59,1779.0 Z" fill="none" stroke="#d99079" stroke-width="1.4"/><path d="M2068.16,1779.0 L2068.16,1297.22 A3.9,3.9 0 0 1 2075.96,1297.22 L2075.96,1779.0 Z" fill="none" stroke="#d99079" stroke-width="1.4"/><path d="M2075.52,1779.0 L2075.52,1297.22 A3.9,3.9 0 0 1 2083.32,1297.22 L2083.32,1779.0 Z" fill="none" stroke="#d99079" stroke-width="1.4"/><path d="M2082.89,1779.0 L2082.89,1483.81 A3.9,3.9 0 0 1 2090.69,1483.81 L2090.69,1779.0 Z" fill="none" stroke="#d99079" stroke-width="1.4"/><path d="M2090.26,1779.0 L2090.26,1313.16 A3.9,3.9 0 0 1 2098.06,1313.16 L2098.06,1779.0 Z" fill="none" stroke="#d99079" stroke-width="1.4"/><path d="M2097.62,1779.0 L2097.62,1187.52 A3.9,3.9 0 0 1 2105.42,1187.52 L2105.42,1779.0 Z" fill="none" stroke="#d99079" stroke-width="1.4"/><path d="M2104.99,1779.0 L2104.99,1106.89 A3.9,3.9 0 0 1 2112.79,1106.89 L2112.79,1779.0 Z" fill="none" stroke="#d99079" stroke-width="1.4"/><path d="M2112.35,1779.0 L2112.35,1342.23 A3.9,3.9 0 0 1 2120.15,1342.23 L2120.15,1779.0 Z" fill="none" stroke="#d99079" stroke-width="1.4"/><path d="M2119.72,1779.0 L2119.72,1362.86 A3.9,3.9 0 0 1 2127.52,1362.86 L2127.52,1779.0 Z" fill="none" stroke="#d99079" stroke-width="1.4"/><path d="M2127.09,1779.0 L2127.09,1065.64 A3.9,3.9 0 0 1 2134.89,1065.64 L2134.89,1779.0 Z" fill="none" stroke="#d99079" stroke-width="1.4"/><path d="M2134.45,1779.0 L2134.45,1195.02 A3.9,3.9 0 0 1 2142.25,1195.02 L2142.25,1779.0 Z" fill="none" stroke="#d99079" stroke-width="1.4"/><path d="M2141.82,1779.0 L2141.82,1343.17 A3.9,3.9 0 0 1 2149.62,1343.17 L2149.62,1779.0 Z" fill="none" stroke="#d99079" stroke-width="1.4"/><path d="M2149.18,1779.0 L2149.18,1248.47 A3.9,3.9 0 0 1 2156.98,1248.47 L2156.98,1779.0 Z" fill="none" stroke="#d99079" stroke-width="1.4"/><path d="M2156.55,1779.0 L2156.55,985.00 A3.9,3.9 0 0 1 2164.35,985.00 L2164.35,1779.0 Z" fill="none" stroke="#d99079" stroke-width="1.4"/><path d="M2163.92,1779.0 L2163.92,1319.73 A3.9,3.9 0 0 1 2171.72,1319.73 L2171.72,1779.0 Z" fill="none" stroke="#d99079" stroke-width="1.4"/><path d="M2171.28,1779.0 L2171.28,1478.18 A3.9,3.9 0 0 1 2179.08,1478.18 L2179.08,1779.0 Z" fill="none" stroke="#d99079" stroke-width="1.4"/><path d="M2178.65,1779.0 L2178.65,1481.93 A3.9,3.9 0 0 1 2186.45,1481.93 L2186.45,1779.0 Z" fill="none" stroke="#d99079" stroke-width="1.4"/><path d="M2186.01,1779.0 L2186.01,1108.77 A3.9,3.9 0 0 1 2193.81,1108.77 L2193.81,1779.0 Z" fill="none" stroke="#d99079" stroke-width="1.4"/><path d="M2193.38,1779.0 L2193.38,1065.64 A3.9,3.9 0 0 1 2201.18,1065.64 L2201.18,1779.0 Z" fill="none" stroke="#d99079" stroke-width="1.4"/><path d="M2200.75,1779.0 L2200.75,1029.07 A3.9,3.9 0 0 1 2208.55,1029.07 L2208.55,1779.0 Z" fill="none" stroke="#d99079" stroke-width="1.4"/><path d="M2208.11,1779.0 L2208.11,1144.39 A3.9,3.9 0 0 1 2215.91,1144.39 L2215.91,1779.0 Z" fill="none" stroke="#d99079" stroke-width="1.4"/><path d="M2215.48,1779.0 L2215.48,875.30 A3.9,3.9 0 0 1 2223.28,875.30 L2223.28,1779.0 Z" fill="none" stroke="#d99079" stroke-width="1.4"/><path d="M2222.84,1779.0 L2222.84,866.86 A3.9,3.9 0 0 1 2230.64,866.86 L2230.64,1779.0 Z" fill="none" stroke="#d99079" stroke-width="1.4"/><path d="M2230.21,1779.0 L2230.21,1069.39 A3.9,3.9 0 0 1 2238.01,1069.39 L2238.01,1779.0 Z" fill="none" stroke="#d99079" stroke-width="1.4"/><path d="M2237.58,1779.0 L2237.58,1033.76 A3.9,3.9 0 0 1 2245.38,1033.76 L2245.38,1779.0 Z" fill="none" stroke="#d99079" stroke-width="1.4"/><path d="M2244.94,1779.0 L2244.94,1184.71 A3.9,3.9 0 0 1 2252.74,1184.71 L2252.74,1779.0 Z" fill="none" stroke="#d99079" stroke-width="1.4"/><path d="M2252.31,1779.0 L2252.31,1008.44 A3.9,3.9 0 0 1 2260.11,1008.44 L2260.11,1779.0 Z" fill="none" stroke="#d99079" stroke-width="1.4"/><path d="M2259.67,1779.0 L2259.67,1001.88 A3.9,3.9 0 0 1 2267.47,1001.88 L2267.47,1779.0 Z" fill="none" stroke="#d99079" stroke-width="1.4"/><path d="M2267.04,1779.0 L2267.04,1289.72 A3.9,3.9 0 0 1 2274.84,1289.72 L2274.84,1779.0 Z" fill="none" stroke="#d99079" stroke-width="1.4"/><path d="M2274.41,1779.0 L2274.41,1323.48 A3.9,3.9 0 0 1 2282.21,1323.48 L2282.21,1779.0 Z" fill="none" stroke="#d99079" stroke-width="1.4"/><path d="M2281.77,1779.0 L2281.77,1103.14 A3.9,3.9 0 0 1 2289.57,1103.14 L2289.57,1779.0 Z" fill="none" stroke="#d99079" stroke-width="1.4"/><path d="M2289.14,1779.0 L2289.14,1103.14 A3.9,3.9 0 0 1 2296.94,1103.14 L2296.94,1779.0 Z" fill="none" stroke="#d99079" stroke-width="1.4"/><path d="M2296.50,1779.0 L2296.50,1232.53 A3.9,3.9 0 0 1 2304.30,1232.53 L2304.30,1779.0 Z" fill="none" stroke="#d99079" stroke-width="1.4"/><path d="M2303.87,1779.0 L2303.87,1321.60 A3.9,3.9 0 0 1 2311.67,1321.60 L2311.67,1779.0 Z" fill="none" stroke="#d99079" stroke-width="1.4"/><path d="M2311.24,1779.0 L2311.24,1349.73 A3.9,3.9 0 0 1 2319.04,1349.73 L2319.04,1779.0 Z" fill="none" stroke="#d99079" stroke-width="1.4"/><path d="M2318.60,1779.0 L2318.60,1435.05 A3.9,3.9 0 0 1 2326.40,1435.05 L2326.40,1779.0 Z" fill="none" stroke="#d99079" stroke-width="1.4"/><path d="M2325.97,1779.0 L2325.97,1450.05 A3.9,3.9 0 0 1 2333.77,1450.05 L2333.77,1779.0 Z" fill="none" stroke="#d99079" stroke-width="1.4"/><path d="M2333.33,1779.0 L2333.33,1386.30 A3.9,3.9 0 0 1 2341.13,1386.30 L2341.13,1779.0 Z" fill="none" stroke="#d99079" stroke-width="1.4"/><path d="M2340.70,1779.0 L2340.70,1315.98 A3.9,3.9 0 0 1 2348.50,1315.98 L2348.50,1779.0 Z" fill="none" stroke="#d99079" stroke-width="1.4"/><path d="M2348.07,1779.0 L2348.07,1027.19 A3.9,3.9 0 0 1 2355.87,1027.19 L2355.87,1779.0 Z" fill="none" stroke="#d99079" stroke-width="1.4"/><path d="M2355.43,1779.0 L2355.43,833.11 A3.9,3.9 0 0 1 2363.23,833.11 L2363.23,1779.0 Z" fill="none" stroke="#d99079" stroke-width="1.4"/><path d="M2362.80,1779.0 L2362.80,791.86 A3.9,3.9 0 0 1 2370.60,791.86 L2370.60,1779.0 Z" fill="none" stroke="#d99079" stroke-width="1.4"/><path d="M2370.16,1779.0 L2370.16,1173.46 A3.9,3.9 0 0 1 2377.96,1173.46 L2377.96,1779.0 Z" fill="none" stroke="#d99079" stroke-width="1.4"/><path d="M2377.53,1779.0 L2377.53,1511.00 A3.9,3.9 0 0 1 2385.33,1511.00 L2385.33,1779.0 Z" fill="none" stroke="#d99079" stroke-width="1.4"/><path d="M2384.90,1779.0 L2384.90,1499.74 A3.9,3.9 0 0 1 2392.70,1499.74 L2392.70,1779.0 Z" fill="none" stroke="#d99079" stroke-width="1.4"/><path d="M2392.26,1779.0 L2392.26,1415.36 A3.9,3.9 0 0 1 2400.06,1415.36 L2400.06,1779.0 Z" fill="none" stroke="#d99079" stroke-width="1.4"/><path d="M2399.63,1779.0 L2399.63,1283.16 A3.9,3.9 0 0 1 2407.43,1283.16 L2407.43,1779.0 Z" fill="none" stroke="#d99079" stroke-width="1.4"/><path d="M2406.99,1779.0 L2406.99,1293.47 A3.9,3.9 0 0 1 2414.79,1293.47 L2414.79,1779.0 Z" fill="none" stroke="#d99079" stroke-width="1.4"/><path d="M2414.36,1779.0 L2414.36,1339.42 A3.9,3.9 0 0 1 2422.16,1339.42 L2422.16,1779.0 Z" fill="none" stroke="#d99079" stroke-width="1.4"/><path d="M2421.73,1779.0 L2421.73,1545.69 A3.9,3.9 0 0 1 2429.53,1545.69 L2429.53,1779.0 Z" fill="none" stroke="#d99079" stroke-width="1.4"/><path d="M2429.09,1779.0 L2429.09,1479.12 A3.9,3.9 0 0 1 2436.89,1479.12 L2436.89,1779.0 Z" fill="none" stroke="#d99079" stroke-width="1.4"/><path d="M2436.46,1779.0 L2436.46,1526.00 A3.9,3.9 0 0 1 2444.26,1526.00 L2444.26,1779.0 Z" fill="none" stroke="#d99079" stroke-width="1.4"/><path d="M2443.82,1779.0 L2443.82,1410.67 A3.9,3.9 0 0 1 2451.62,1410.67 L2451.62,1779.0 Z" fill="none" stroke="#d99079" stroke-width="1.4"/><path d="M2451.19,1779.0 L2451.19,1401.30 A3.9,3.9 0 0 1 2458.99,1401.30 L2458.99,1779.0 Z" fill="none" stroke="#d99079" stroke-width="1.4"/><path d="M2458.56,1779.0 L2458.56,1339.42 A3.9,3.9 0 0 1 2466.36,1339.42 L2466.36,1779.0 Z" fill="none" stroke="#d99079" stroke-width="1.4"/><path d="M2465.92,1779.0 L2465.92,1095.64 A3.9,3.9 0 0 1 2473.72,1095.64 L2473.72,1779.0 Z" fill="none" stroke="#d99079" stroke-width="1.4"/><path d="M2473.29,1779.0 L2473.29,1144.39 A3.9,3.9 0 0 1 2481.09,1144.39 L2481.09,1779.0 Z" fill="none" stroke="#d99079" stroke-width="1.4"/><path d="M2480.65,1779.0 L2480.65,1067.51 A3.9,3.9 0 0 1 2488.45,1067.51 L2488.45,1779.0 Z" fill="none" stroke="#d99079" stroke-width="1.4"/><path d="M2488.02,1779.0 L2488.02,1404.11 A3.9,3.9 0 0 1 2495.82,1404.11 L2495.82,1779.0 Z" fill="none" stroke="#d99079" stroke-width="1.4"/><path d="M2495.39,1779.0 L2495.39,1066.57 A3.9,3.9 0 0 1 2503.19,1066.57 L2503.19,1779.0 Z" fill="none" stroke="#d99079" stroke-width="1.4"/><path d="M2502.75,1779.0 L2502.75,869.68 A3.9,3.9 0 0 1 2510.55,869.68 L2510.55,1779.0 Z" fill="none" stroke="#d99079" stroke-width="1.4"/><path d="M2510.12,1779.0 L2510.12,825.61 A3.9,3.9 0 0 1 2517.92,825.61 L2517.92,1779.0 Z" fill="none" stroke="#d99079" stroke-width="1.4"/><path d="M2517.48,1779.0 L2517.48,714.97 A3.9,3.9 0 0 1 2525.28,714.97 L2525.28,1779.0 Z" fill="none" stroke="#e0a088" stroke-width="1.4"/><path d="M2524.85,1779.0 L2524.85,958.75 A3.9,3.9 0 0 1 2532.65,958.75 L2532.65,1779.0 Z" fill="none" stroke="#d99079" stroke-width="1.4"/></g>
<g><path d="M315.05,1779.0 L315.05,1247.53 A3.9,3.9 0 0 1 322.85,1247.53 L322.85,1779.0 Z" fill="#d0443a"/><path d="M322.42,1779.0 L322.42,869.68 A3.9,3.9 0 0 1 330.22,869.68 L330.22,1779.0 Z" fill="#ee977a"/><path d="M329.78,1779.0 L329.78,1205.34 A3.9,3.9 0 0 1 337.58,1205.34 L337.58,1779.0 Z" fill="#ee977a"/><path d="M337.15,1779.0 L337.15,1138.77 A3.9,3.9 0 0 1 344.95,1138.77 L344.95,1779.0 Z" fill="#ee977a"/><path d="M344.51,1779.0 L344.51,1418.17 A3.9,3.9 0 0 1 352.31,1418.17 L352.31,1779.0 Z" fill="#ee977a"/><path d="M351.88,1779.0 L351.88,1208.15 A3.9,3.9 0 0 1 359.68,1208.15 L359.68,1779.0 Z" fill="#ee977a"/><path d="M359.25,1779.0 L359.25,941.87 A3.9,3.9 0 0 1 367.05,941.87 L367.05,1779.0 Z" fill="#ee977a"/><path d="M366.61,1779.0 L366.61,1056.26 A3.9,3.9 0 0 1 374.41,1056.26 L374.41,1779.0 Z" fill="#ee977a"/><path d="M373.98,1779.0 L373.98,1266.28 A3.9,3.9 0 0 1 381.78,1266.28 L381.78,1779.0 Z" fill="#ee977a"/><path d="M381.34,1779.0 L381.34,1393.80 A3.9,3.9 0 0 1 389.14,1393.80 L389.14,1779.0 Z" fill="#ee977a"/><path d="M388.71,1779.0 L388.71,1287.85 A3.9,3.9 0 0 1 396.51,1287.85 L396.51,1779.0 Z" fill="#ee977a"/><path d="M396.08,1779.0 L396.08,1248.47 A3.9,3.9 0 0 1 403.88,1248.47 L403.88,1779.0 Z" fill="#ee977a"/><path d="M403.44,1779.0 L403.44,1411.61 A3.9,3.9 0 0 1 411.24,1411.61 L411.24,1779.0 Z" fill="#ee977a"/><path d="M410.81,1779.0 L410.81,1459.43 A3.9,3.9 0 0 1 418.61,1459.43 L418.61,1779.0 Z" fill="#ee977a"/><path d="M418.17,1779.0 L418.17,1316.91 A3.9,3.9 0 0 1 425.97,1316.91 L425.97,1779.0 Z" fill="#ee977a"/><path d="M425.54,1779.0 L425.54,1550.38 A3.9,3.9 0 0 1 433.34,1550.38 L433.34,1779.0 Z" fill="#ee977a"/><path d="M432.91,1779.0 L432.91,1525.06 A3.9,3.9 0 0 1 440.71,1525.06 L440.71,1779.0 Z" fill="#ee977a"/><path d="M440.27,1779.0 L440.27,1562.56 A3.9,3.9 0 0 1 448.07,1562.56 L448.07,1779.0 Z" fill="#ee977a"/><path d="M447.64,1779.0 L447.64,1554.13 A3.9,3.9 0 0 1 455.44,1554.13 L455.44,1779.0 Z" fill="#ee977a"/><path d="M455.00,1779.0 L455.00,1481.93 A3.9,3.9 0 0 1 462.80,1481.93 L462.80,1779.0 Z" fill="#ee977a"/><path d="M462.37,1779.0 L462.37,1557.88 A3.9,3.9 0 0 1 470.17,1557.88 L470.17,1779.0 Z" fill="#ee977a"/><path d="M469.74,1779.0 L469.74,1529.75 A3.9,3.9 0 0 1 477.54,1529.75 L477.54,1779.0 Z" fill="#ee977a"/><path d="M477.10,1779.0 L477.10,1443.49 A3.9,3.9 0 0 1 484.90,1443.49 L484.90,1779.0 Z" fill="#ee977a"/><path d="M484.47,1779.0 L484.47,1221.28 A3.9,3.9 0 0 1 492.27,1221.28 L492.27,1779.0 Z" fill="#ee977a"/><path d="M491.83,1779.0 L491.83,1091.89 A3.9,3.9 0 0 1 499.63,1091.89 L499.63,1779.0 Z" fill="#ee977a"/><path d="M499.20,1779.0 L499.20,1228.78 A3.9,3.9 0 0 1 507.00,1228.78 L507.00,1779.0 Z" fill="#ee977a"/><path d="M506.57,1779.0 L506.57,1302.85 A3.9,3.9 0 0 1 514.37,1302.85 L514.37,1779.0 Z" fill="#ee977a"/><path d="M513.93,1779.0 L513.93,1091.89 A3.9,3.9 0 0 1 521.73,1091.89 L521.73,1779.0 Z" fill="#ee977a"/><path d="M521.30,1779.0 L521.30,1271.91 A3.9,3.9 0 0 1 529.10,1271.91 L529.10,1779.0 Z" fill="#ee977a"/><path d="M528.66,1779.0 L528.66,1177.21 A3.9,3.9 0 0 1 536.46,1177.21 L536.46,1779.0 Z" fill="#ee977a"/><path d="M536.03,1779.0 L536.03,1405.05 A3.9,3.9 0 0 1 543.83,1405.05 L543.83,1779.0 Z" fill="#ee977a"/><path d="M543.40,1779.0 L543.40,1390.05 A3.9,3.9 0 0 1 551.20,1390.05 L551.20,1779.0 Z" fill="#ee977a"/><path d="M550.76,1779.0 L550.76,1491.31 A3.9,3.9 0 0 1 558.56,1491.31 L558.56,1779.0 Z" fill="#ee977a"/><path d="M558.13,1779.0 L558.13,1514.75 A3.9,3.9 0 0 1 565.93,1514.75 L565.93,1779.0 Z" fill="#ee977a"/><path d="M565.49,1779.0 L565.49,1554.13 A3.9,3.9 0 0 1 573.29,1554.13 L573.29,1779.0 Z" fill="#ee977a"/><path d="M572.86,1779.0 L572.86,1451.93 A3.9,3.9 0 0 1 580.66,1451.93 L580.66,1779.0 Z" fill="#ee977a"/><path d="M580.23,1779.0 L580.23,1454.74 A3.9,3.9 0 0 1 588.03,1454.74 L588.03,1779.0 Z" fill="#ee977a"/><path d="M587.59,1779.0 L587.59,1524.12 A3.9,3.9 0 0 1 595.39,1524.12 L595.39,1779.0 Z" fill="#ee977a"/><path d="M594.96,1779.0 L594.96,1161.27 A3.9,3.9 0 0 1 602.76,1161.27 L602.76,1779.0 Z" fill="#ee977a"/><path d="M602.32,1779.0 L602.32,1204.40 A3.9,3.9 0 0 1 610.12,1204.40 L610.12,1779.0 Z" fill="#ee977a"/><path d="M609.69,1779.0 L609.69,1341.29 A3.9,3.9 0 0 1 617.49,1341.29 L617.49,1779.0 Z" fill="#ee977a"/><path d="M617.06,1779.0 L617.06,1266.28 A3.9,3.9 0 0 1 624.86,1266.28 L624.86,1779.0 Z" fill="#ee977a"/><path d="M624.42,1779.0 L624.42,1277.53 A3.9,3.9 0 0 1 632.22,1277.53 L632.22,1779.0 Z" fill="#ee977a"/><path d="M631.79,1779.0 L631.79,1402.23 A3.9,3.9 0 0 1 639.59,1402.23 L639.59,1779.0 Z" fill="#ee977a"/><path d="M639.15,1779.0 L639.15,1536.31 A3.9,3.9 0 0 1 646.95,1536.31 L646.95,1779.0 Z" fill="#ee977a"/><path d="M646.52,1779.0 L646.52,1594.44 A3.9,3.9 0 0 1 654.32,1594.44 L654.32,1779.0 Z" fill="#ee977a"/><path d="M653.89,1779.0 L653.89,1579.44 A3.9,3.9 0 0 1 661.69,1579.44 L661.69,1779.0 Z" fill="#ee977a"/><path d="M661.25,1779.0 L661.25,1411.61 A3.9,3.9 0 0 1 669.05,1411.61 L669.05,1779.0 Z" fill="#ee977a"/><path d="M668.62,1779.0 L668.62,1491.31 A3.9,3.9 0 0 1 676.42,1491.31 L676.42,1779.0 Z" fill="#ee977a"/><path d="M675.98,1779.0 L675.98,1394.73 A3.9,3.9 0 0 1 683.78,1394.73 L683.78,1779.0 Z" fill="#ee977a"/><path d="M683.35,1779.0 L683.35,1200.65 A3.9,3.9 0 0 1 691.15,1200.65 L691.15,1779.0 Z" fill="#ee977a"/><path d="M690.72,1779.0 L690.72,1276.60 A3.9,3.9 0 0 1 698.52,1276.60 L698.52,1779.0 Z" fill="#ee977a"/><path d="M698.08,1779.0 L698.08,1233.47 A3.9,3.9 0 0 1 705.88,1233.47 L705.88,1779.0 Z" fill="#ee977a"/><path d="M705.45,1779.0 L705.45,1135.96 A3.9,3.9 0 0 1 713.25,1135.96 L713.25,1779.0 Z" fill="#ee977a"/><path d="M712.81,1779.0 L712.81,1246.59 A3.9,3.9 0 0 1 720.61,1246.59 L720.61,1779.0 Z" fill="#ee977a"/><path d="M720.18,1779.0 L720.18,1153.77 A3.9,3.9 0 0 1 727.98,1153.77 L727.98,1779.0 Z" fill="#ee977a"/><path d="M727.55,1779.0 L727.55,1481.93 A3.9,3.9 0 0 1 735.35,1481.93 L735.35,1779.0 Z" fill="#ee977a"/><path d="M734.91,1779.0 L734.91,1509.12 A3.9,3.9 0 0 1 742.71,1509.12 L742.71,1779.0 Z" fill="#ee977a"/><path d="M742.28,1779.0 L742.28,1458.49 A3.9,3.9 0 0 1 750.08,1458.49 L750.08,1779.0 Z" fill="#ee977a"/><path d="M749.64,1779.0 L749.64,1521.31 A3.9,3.9 0 0 1 757.44,1521.31 L757.44,1779.0 Z" fill="#ee977a"/><path d="M757.01,1779.0 L757.01,1481.93 A3.9,3.9 0 0 1 764.81,1481.93 L764.81,1779.0 Z" fill="#ee977a"/><path d="M764.38,1779.0 L764.38,1272.85 A3.9,3.9 0 0 1 772.18,1272.85 L772.18,1779.0 Z" fill="#ee977a"/><path d="M771.74,1779.0 L771.74,1273.78 A3.9,3.9 0 0 1 779.54,1273.78 L779.54,1779.0 Z" fill="#ee977a"/><path d="M779.11,1779.0 L779.11,1306.60 A3.9,3.9 0 0 1 786.91,1306.60 L786.91,1779.0 Z" fill="#ee977a"/><path d="M786.47,1779.0 L786.47,1196.90 A3.9,3.9 0 0 1 794.27,1196.90 L794.27,1779.0 Z" fill="#ee977a"/><path d="M793.84,1779.0 L793.84,1288.78 A3.9,3.9 0 0 1 801.64,1288.78 L801.64,1779.0 Z" fill="#ee977a"/><path d="M801.21,1779.0 L801.21,1379.73 A3.9,3.9 0 0 1 809.01,1379.73 L809.01,1779.0 Z" fill="#ee977a"/><path d="M808.57,1779.0 L808.57,1280.35 A3.9,3.9 0 0 1 816.37,1280.35 L816.37,1779.0 Z" fill="#ee977a"/><path d="M815.94,1779.0 L815.94,1262.53 A3.9,3.9 0 0 1 823.74,1262.53 L823.74,1779.0 Z" fill="#ee977a"/><path d="M823.30,1779.0 L823.30,1480.06 A3.9,3.9 0 0 1 831.10,1480.06 L831.10,1779.0 Z" fill="#ee977a"/><path d="M830.67,1779.0 L830.67,1505.37 A3.9,3.9 0 0 1 838.47,1505.37 L838.47,1779.0 Z" fill="#ee977a"/><path d="M838.04,1779.0 L838.04,1557.88 A3.9,3.9 0 0 1 845.84,1557.88 L845.84,1779.0 Z" fill="#ee977a"/><path d="M845.40,1779.0 L845.40,1528.81 A3.9,3.9 0 0 1 853.20,1528.81 L853.20,1779.0 Z" fill="#ee977a"/><path d="M852.77,1779.0 L852.77,1507.25 A3.9,3.9 0 0 1 860.57,1507.25 L860.57,1779.0 Z" fill="#ee977a"/><path d="M860.13,1779.0 L860.13,1305.66 A3.9,3.9 0 0 1 867.93,1305.66 L867.93,1779.0 Z" fill="#ee977a"/><path d="M867.50,1779.0 L867.50,1243.78 A3.9,3.9 0 0 1 875.30,1243.78 L875.30,1779.0 Z" fill="#ee977a"/><path d="M874.87,1779.0 L874.87,1270.03 A3.9,3.9 0 0 1 882.67,1270.03 L882.67,1779.0 Z" fill="#ee977a"/><path d="M882.23,1779.0 L882.23,1319.73 A3.9,3.9 0 0 1 890.03,1319.73 L890.03,1779.0 Z" fill="#ee977a"/><path d="M889.60,1779.0 L889.60,1386.30 A3.9,3.9 0 0 1 897.40,1386.30 L897.40,1779.0 Z" fill="#ee977a"/><path d="M896.96,1779.0 L896.96,1390.98 A3.9,3.9 0 0 1 904.76,1390.98 L904.76,1779.0 Z" fill="#ee977a"/><path d="M904.33,1779.0 L904.33,1196.90 A3.9,3.9 0 0 1 912.13,1196.90 L912.13,1779.0 Z" fill="#ee977a"/><path d="M911.70,1779.0 L911.70,926.87 A3.9,3.9 0 0 1 919.50,926.87 L919.50,1779.0 Z" fill="#ee977a"/><path d="M919.06,1779.0 L919.06,1190.34 A3.9,3.9 0 0 1 926.86,1190.34 L926.86,1779.0 Z" fill="#ee977a"/><path d="M926.43,1779.0 L926.43,1512.87 A3.9,3.9 0 0 1 934.23,1512.87 L934.23,1779.0 Z" fill="#ee977a"/><path d="M933.79,1779.0 L933.79,1383.48 A3.9,3.9 0 0 1 941.59,1383.48 L941.59,1779.0 Z" fill="#ee977a"/><path d="M941.16,1779.0 L941.16,1426.61 A3.9,3.9 0 0 1 948.96,1426.61 L948.96,1779.0 Z" fill="#ee977a"/><path d="M948.53,1779.0 L948.53,1375.98 A3.9,3.9 0 0 1 956.33,1375.98 L956.33,1779.0 Z" fill="#ee977a"/><path d="M955.89,1779.0 L955.89,1287.85 A3.9,3.9 0 0 1 963.69,1287.85 L963.69,1779.0 Z" fill="#ee977a"/><path d="M963.26,1779.0 L963.26,1268.16 A3.9,3.9 0 0 1 971.06,1268.16 L971.06,1779.0 Z" fill="#ee977a"/><path d="M970.62,1779.0 L970.62,902.49 A3.9,3.9 0 0 1 978.42,902.49 L978.42,1779.0 Z" fill="#ee977a"/><path d="M977.99,1779.0 L977.99,1276.60 A3.9,3.9 0 0 1 985.79,1276.60 L985.79,1779.0 Z" fill="#ee977a"/><path d="M985.36,1779.0 L985.36,1285.03 A3.9,3.9 0 0 1 993.16,1285.03 L993.16,1779.0 Z" fill="#ee977a"/><path d="M992.72,1779.0 L992.72,1094.70 A3.9,3.9 0 0 1 1000.52,1094.70 L1000.52,1779.0 Z" fill="#ee977a"/><path d="M1000.09,1779.0 L1000.09,1197.84 A3.9,3.9 0 0 1 1007.89,1197.84 L1007.89,1779.0 Z" fill="#ee977a"/><path d="M1007.45,1779.0 L1007.45,1306.60 A3.9,3.9 0 0 1 1015.25,1306.60 L1015.25,1779.0 Z" fill="#ee977a"/><path d="M1014.82,1779.0 L1014.82,1075.01 A3.9,3.9 0 0 1 1022.62,1075.01 L1022.62,1779.0 Z" fill="#ee977a"/><path d="M1022.19,1779.0 L1022.19,1114.39 A3.9,3.9 0 0 1 1029.99,1114.39 L1029.99,1779.0 Z" fill="#ee977a"/><path d="M1029.55,1779.0 L1029.55,1305.66 A3.9,3.9 0 0 1 1037.35,1305.66 L1037.35,1779.0 Z" fill="#ee977a"/><path d="M1036.92,1779.0 L1036.92,1393.80 A3.9,3.9 0 0 1 1044.72,1393.80 L1044.72,1779.0 Z" fill="#ee977a"/><path d="M1044.28,1779.0 L1044.28,1323.48 A3.9,3.9 0 0 1 1052.08,1323.48 L1052.08,1779.0 Z" fill="#ee977a"/><path d="M1051.65,1779.0 L1051.65,1287.85 A3.9,3.9 0 0 1 1059.45,1287.85 L1059.45,1779.0 Z" fill="#ee977a"/><path d="M1059.02,1779.0 L1059.02,1135.96 A3.9,3.9 0 0 1 1066.82,1135.96 L1066.82,1779.0 Z" fill="#ee977a"/><path d="M1066.38,1779.0 L1066.38,1197.84 A3.9,3.9 0 0 1 1074.18,1197.84 L1074.18,1779.0 Z" fill="#ee977a"/><path d="M1073.75,1779.0 L1073.75,1027.19 A3.9,3.9 0 0 1 1081.55,1027.19 L1081.55,1779.0 Z" fill="#ee977a"/><path d="M1081.11,1779.0 L1081.11,1338.48 A3.9,3.9 0 0 1 1088.91,1338.48 L1088.91,1779.0 Z" fill="#ee977a"/><path d="M1088.48,1779.0 L1088.48,1143.46 A3.9,3.9 0 0 1 1096.28,1143.46 L1096.28,1779.0 Z" fill="#ee977a"/><path d="M1095.85,1779.0 L1095.85,1327.23 A3.9,3.9 0 0 1 1103.65,1327.23 L1103.65,1779.0 Z" fill="#ee977a"/><path d="M1103.21,1779.0 L1103.21,1291.60 A3.9,3.9 0 0 1 1111.01,1291.60 L1111.01,1779.0 Z" fill="#ee977a"/><path d="M1110.58,1779.0 L1110.58,1363.79 A3.9,3.9 0 0 1 1118.38,1363.79 L1118.38,1779.0 Z" fill="#ee977a"/><path d="M1117.94,1779.0 L1117.94,1309.41 A3.9,3.9 0 0 1 1125.74,1309.41 L1125.74,1779.0 Z" fill="#ee977a"/><path d="M1125.31,1779.0 L1125.31,1219.40 A3.9,3.9 0 0 1 1133.11,1219.40 L1133.11,1779.0 Z" fill="#ee977a"/><path d="M1132.68,1779.0 L1132.68,1357.23 A3.9,3.9 0 0 1 1140.48,1357.23 L1140.48,1779.0 Z" fill="#ee977a"/><path d="M1140.04,1779.0 L1140.04,1423.80 A3.9,3.9 0 0 1 1147.84,1423.80 L1147.84,1779.0 Z" fill="#ee977a"/><path d="M1147.41,1779.0 L1147.41,1407.86 A3.9,3.9 0 0 1 1155.21,1407.86 L1155.21,1779.0 Z" fill="#ee977a"/><path d="M1154.77,1779.0 L1154.77,1400.36 A3.9,3.9 0 0 1 1162.57,1400.36 L1162.57,1779.0 Z" fill="#ee977a"/><path d="M1162.14,1779.0 L1162.14,1429.42 A3.9,3.9 0 0 1 1169.94,1429.42 L1169.94,1779.0 Z" fill="#ee977a"/><path d="M1169.51,1779.0 L1169.51,1140.64 A3.9,3.9 0 0 1 1177.31,1140.64 L1177.31,1779.0 Z" fill="#ee977a"/><path d="M1176.87,1779.0 L1176.87,1090.95 A3.9,3.9 0 0 1 1184.67,1090.95 L1184.67,1779.0 Z" fill="#ee977a"/><path d="M1184.24,1779.0 L1184.24,1312.22 A3.9,3.9 0 0 1 1192.04,1312.22 L1192.04,1779.0 Z" fill="#ee977a"/><path d="M1191.60,1779.0 L1191.60,1298.16 A3.9,3.9 0 0 1 1199.40,1298.16 L1199.40,1779.0 Z" fill="#ee977a"/><path d="M1198.97,1779.0 L1198.97,1320.66 A3.9,3.9 0 0 1 1206.77,1320.66 L1206.77,1779.0 Z" fill="#ee977a"/><path d="M1206.34,1779.0 L1206.34,1204.40 A3.9,3.9 0 0 1 1214.14,1204.40 L1214.14,1779.0 Z" fill="#ee977a"/><path d="M1213.70,1779.0 L1213.70,1154.71 A3.9,3.9 0 0 1 1221.50,1154.71 L1221.50,1779.0 Z" fill="#ee977a"/><path d="M1221.07,1779.0 L1221.07,1194.09 A3.9,3.9 0 0 1 1228.87,1194.09 L1228.87,1779.0 Z" fill="#ee977a"/><path d="M1228.43,1779.0 L1228.43,1048.76 A3.9,3.9 0 0 1 1236.23,1048.76 L1236.23,1779.0 Z" fill="#ee977a"/><path d="M1235.80,1779.0 L1235.80,1254.09 A3.9,3.9 0 0 1 1243.60,1254.09 L1243.60,1779.0 Z" fill="#ee977a"/><path d="M1243.17,1779.0 L1243.17,1204.40 A3.9,3.9 0 0 1 1250.97,1204.40 L1250.97,1779.0 Z" fill="#ee977a"/><path d="M1250.53,1779.0 L1250.53,1287.85 A3.9,3.9 0 0 1 1258.33,1287.85 L1258.33,1779.0 Z" fill="#ee977a"/><path d="M1257.90,1779.0 L1257.90,1299.10 A3.9,3.9 0 0 1 1265.70,1299.10 L1265.70,1779.0 Z" fill="#ee977a"/><path d="M1265.26,1779.0 L1265.26,1246.59 A3.9,3.9 0 0 1 1273.06,1246.59 L1273.06,1779.0 Z" fill="#ee977a"/><path d="M1272.63,1779.0 L1272.63,1187.52 A3.9,3.9 0 0 1 1280.43,1187.52 L1280.43,1779.0 Z" fill="#ee977a"/><path d="M1280.00,1779.0 L1280.00,1007.50 A3.9,3.9 0 0 1 1287.80,1007.50 L1287.80,1779.0 Z" fill="#ee977a"/><path d="M1287.36,1779.0 L1287.36,1048.76 A3.9,3.9 0 0 1 1295.16,1048.76 L1295.16,1779.0 Z" fill="#ee977a"/><path d="M1294.73,1779.0 L1294.73,1212.84 A3.9,3.9 0 0 1 1302.53,1212.84 L1302.53,1779.0 Z" fill="#ee977a"/><path d="M1302.09,1779.0 L1302.09,1162.21 A3.9,3.9 0 0 1 1309.89,1162.21 L1309.89,1779.0 Z" fill="#ee977a"/><path d="M1309.46,1779.0 L1309.46,1109.70 A3.9,3.9 0 0 1 1317.26,1109.70 L1317.26,1779.0 Z" fill="#ee977a"/><path d="M1316.83,1779.0 L1316.83,1175.34 A3.9,3.9 0 0 1 1324.63,1175.34 L1324.63,1779.0 Z" fill="#ee977a"/><path d="M1324.19,1779.0 L1324.19,1116.27 A3.9,3.9 0 0 1 1331.99,1116.27 L1331.99,1779.0 Z" fill="#ee977a"/><path d="M1331.56,1779.0 L1331.56,1144.39 A3.9,3.9 0 0 1 1339.36,1144.39 L1339.36,1779.0 Z" fill="#ee977a"/><path d="M1338.92,1779.0 L1338.92,1302.85 A3.9,3.9 0 0 1 1346.72,1302.85 L1346.72,1779.0 Z" fill="#ee977a"/><path d="M1346.29,1779.0 L1346.29,1281.28 A3.9,3.9 0 0 1 1354.09,1281.28 L1354.09,1779.0 Z" fill="#ee977a"/><path d="M1353.66,1779.0 L1353.66,1107.83 A3.9,3.9 0 0 1 1361.46,1107.83 L1361.46,1779.0 Z" fill="#ee977a"/><path d="M1361.02,1779.0 L1361.02,1073.14 A3.9,3.9 0 0 1 1368.82,1073.14 L1368.82,1779.0 Z" fill="#ee977a"/><path d="M1368.39,1779.0 L1368.39,1105.95 A3.9,3.9 0 0 1 1376.19,1105.95 L1376.19,1779.0 Z" fill="#ee977a"/><path d="M1375.75,1779.0 L1375.75,1014.07 A3.9,3.9 0 0 1 1383.55,1014.07 L1383.55,1779.0 Z" fill="#ee977a"/><path d="M1383.12,1779.0 L1383.12,1012.19 A3.9,3.9 0 0 1 1390.92,1012.19 L1390.92,1779.0 Z" fill="#ee977a"/><path d="M1390.49,1779.0 L1390.49,1139.71 A3.9,3.9 0 0 1 1398.29,1139.71 L1398.29,1779.0 Z" fill="#ee977a"/><path d="M1397.85,1779.0 L1397.85,1087.20 A3.9,3.9 0 0 1 1405.65,1087.20 L1405.65,1779.0 Z" fill="#ee977a"/><path d="M1405.22,1779.0 L1405.22,1118.14 A3.9,3.9 0 0 1 1413.02,1118.14 L1413.02,1779.0 Z" fill="#ee977a"/><path d="M1412.58,1779.0 L1412.58,1076.89 A3.9,3.9 0 0 1 1420.38,1076.89 L1420.38,1779.0 Z" fill="#ee977a"/><path d="M1419.95,1779.0 L1419.95,969.06 A3.9,3.9 0 0 1 1427.75,969.06 L1427.75,1779.0 Z" fill="#ee977a"/><path d="M1427.32,1779.0 L1427.32,1225.03 A3.9,3.9 0 0 1 1435.12,1225.03 L1435.12,1779.0 Z" fill="#ee977a"/><path d="M1434.68,1779.0 L1434.68,1076.89 A3.9,3.9 0 0 1 1442.48,1076.89 L1442.48,1779.0 Z" fill="#ee977a"/><path d="M1442.05,1779.0 L1442.05,1287.85 A3.9,3.9 0 0 1 1449.85,1287.85 L1449.85,1779.0 Z" fill="#ee977a"/><path d="M1449.41,1779.0 L1449.41,1200.65 A3.9,3.9 0 0 1 1457.21,1200.65 L1457.21,1779.0 Z" fill="#ee977a"/><path d="M1456.78,1779.0 L1456.78,1210.03 A3.9,3.9 0 0 1 1464.58,1210.03 L1464.58,1779.0 Z" fill="#ee977a"/><path d="M1464.15,1779.0 L1464.15,1172.52 A3.9,3.9 0 0 1 1471.95,1172.52 L1471.95,1779.0 Z" fill="#ee977a"/><path d="M1471.51,1779.0 L1471.51,945.62 A3.9,3.9 0 0 1 1479.31,945.62 L1479.31,1779.0 Z" fill="#ee977a"/><path d="M1478.88,1779.0 L1478.88,1123.77 A3.9,3.9 0 0 1 1486.68,1123.77 L1486.68,1779.0 Z" fill="#ee977a"/><path d="M1486.24,1779.0 L1486.24,849.99 A3.9,3.9 0 0 1 1494.04,849.99 L1494.04,1779.0 Z" fill="#ee977a"/><path d="M1493.61,1779.0 L1493.61,944.69 A3.9,3.9 0 0 1 1501.41,944.69 L1501.41,1779.0 Z" fill="#ee977a"/><path d="M1500.98,1779.0 L1500.98,1001.88 A3.9,3.9 0 0 1 1508.78,1001.88 L1508.78,1779.0 Z" fill="#ee977a"/><path d="M1508.34,1779.0 L1508.34,1125.64 A3.9,3.9 0 0 1 1516.14,1125.64 L1516.14,1779.0 Z" fill="#ee977a"/><path d="M1515.71,1779.0 L1515.71,1069.39 A3.9,3.9 0 0 1 1523.51,1069.39 L1523.51,1779.0 Z" fill="#ee977a"/><path d="M1523.07,1779.0 L1523.07,961.56 A3.9,3.9 0 0 1 1530.87,961.56 L1530.87,1779.0 Z" fill="#ee977a"/><path d="M1530.44,1779.0 L1530.44,975.63 A3.9,3.9 0 0 1 1538.24,975.63 L1538.24,1779.0 Z" fill="#ee977a"/><path d="M1537.81,1779.0 L1537.81,1179.09 A3.9,3.9 0 0 1 1545.61,1179.09 L1545.61,1779.0 Z" fill="#ee977a"/><path d="M1545.17,1779.0 L1545.17,1193.15 A3.9,3.9 0 0 1 1552.97,1193.15 L1552.97,1779.0 Z" fill="#ee977a"/><path d="M1552.54,1779.0 L1552.54,1240.97 A3.9,3.9 0 0 1 1560.34,1240.97 L1560.34,1779.0 Z" fill="#ee977a"/><path d="M1559.90,1779.0 L1559.90,1224.09 A3.9,3.9 0 0 1 1567.70,1224.09 L1567.70,1779.0 Z" fill="#ee977a"/><path d="M1567.27,1779.0 L1567.27,1055.32 A3.9,3.9 0 0 1 1575.07,1055.32 L1575.07,1779.0 Z" fill="#ee977a"/><path d="M1574.64,1779.0 L1574.64,1161.27 A3.9,3.9 0 0 1 1582.44,1161.27 L1582.44,1779.0 Z" fill="#ee977a"/><path d="M1582.00,1779.0 L1582.00,1165.02 A3.9,3.9 0 0 1 1589.80,1165.02 L1589.80,1779.0 Z" fill="#ee977a"/><path d="M1589.37,1779.0 L1589.37,1050.63 A3.9,3.9 0 0 1 1597.17,1050.63 L1597.17,1779.0 Z" fill="#ee977a"/><path d="M1596.73,1779.0 L1596.73,979.38 A3.9,3.9 0 0 1 1604.53,979.38 L1604.53,1779.0 Z" fill="#ee977a"/><path d="M1604.10,1779.0 L1604.10,954.06 A3.9,3.9 0 0 1 1611.90,954.06 L1611.90,1779.0 Z" fill="#ee977a"/><path d="M1611.47,1779.0 L1611.47,1098.45 A3.9,3.9 0 0 1 1619.27,1098.45 L1619.27,1779.0 Z" fill="#ee977a"/><path d="M1618.83,1779.0 L1618.83,1196.90 A3.9,3.9 0 0 1 1626.63,1196.90 L1626.63,1779.0 Z" fill="#ee977a"/><path d="M1626.20,1779.0 L1626.20,1150.02 A3.9,3.9 0 0 1 1634.00,1150.02 L1634.00,1779.0 Z" fill="#ee977a"/><path d="M1633.56,1779.0 L1633.56,982.19 A3.9,3.9 0 0 1 1641.36,982.19 L1641.36,1779.0 Z" fill="#ee977a"/><path d="M1640.93,1779.0 L1640.93,1004.69 A3.9,3.9 0 0 1 1648.73,1004.69 L1648.73,1779.0 Z" fill="#ee977a"/><path d="M1648.30,1779.0 L1648.30,1237.22 A3.9,3.9 0 0 1 1656.10,1237.22 L1656.10,1779.0 Z" fill="#ee977a"/><path d="M1655.66,1779.0 L1655.66,1276.60 A3.9,3.9 0 0 1 1663.46,1276.60 L1663.46,1779.0 Z" fill="#ee977a"/><path d="M1663.03,1779.0 L1663.03,1240.03 A3.9,3.9 0 0 1 1670.83,1240.03 L1670.83,1779.0 Z" fill="#ee977a"/><path d="M1670.39,1779.0 L1670.39,1180.96 A3.9,3.9 0 0 1 1678.19,1180.96 L1678.19,1779.0 Z" fill="#ee977a"/><path d="M1677.76,1779.0 L1677.76,1232.53 A3.9,3.9 0 0 1 1685.56,1232.53 L1685.56,1779.0 Z" fill="#ee977a"/><path d="M1685.13,1779.0 L1685.13,1000.00 A3.9,3.9 0 0 1 1692.93,1000.00 L1692.93,1779.0 Z" fill="#ee977a"/><path d="M1692.49,1779.0 L1692.49,1148.14 A3.9,3.9 0 0 1 1700.29,1148.14 L1700.29,1779.0 Z" fill="#ee977a"/><path d="M1699.86,1779.0 L1699.86,1291.60 A3.9,3.9 0 0 1 1707.66,1291.60 L1707.66,1779.0 Z" fill="#ee977a"/><path d="M1707.22,1779.0 L1707.22,1186.59 A3.9,3.9 0 0 1 1715.02,1186.59 L1715.02,1779.0 Z" fill="#ee977a"/><path d="M1714.59,1779.0 L1714.59,1251.28 A3.9,3.9 0 0 1 1722.39,1251.28 L1722.39,1779.0 Z" fill="#ee977a"/><path d="M1721.96,1779.0 L1721.96,1301.91 A3.9,3.9 0 0 1 1729.76,1301.91 L1729.76,1779.0 Z" fill="#ee977a"/><path d="M1729.32,1779.0 L1729.32,1239.09 A3.9,3.9 0 0 1 1737.12,1239.09 L1737.12,1779.0 Z" fill="#ee977a"/><path d="M1736.69,1779.0 L1736.69,1216.59 A3.9,3.9 0 0 1 1744.49,1216.59 L1744.49,1779.0 Z" fill="#ee977a"/><path d="M1744.05,1779.0 L1744.05,1247.53 A3.9,3.9 0 0 1 1751.85,1247.53 L1751.85,1779.0 Z" fill="#ee977a"/><path d="M1751.42,1779.0 L1751.42,1372.23 A3.9,3.9 0 0 1 1759.22,1372.23 L1759.22,1779.0 Z" fill="#ee977a"/><path d="M1758.79,1779.0 L1758.79,1285.03 A3.9,3.9 0 0 1 1766.59,1285.03 L1766.59,1779.0 Z" fill="#ee977a"/><path d="M1766.15,1779.0 L1766.15,1300.97 A3.9,3.9 0 0 1 1773.95,1300.97 L1773.95,1779.0 Z" fill="#ee977a"/><path d="M1773.52,1779.0 L1773.52,1225.97 A3.9,3.9 0 0 1 1781.32,1225.97 L1781.32,1779.0 Z" fill="#ee977a"/><path d="M1780.88,1779.0 L1780.88,1375.98 A3.9,3.9 0 0 1 1788.68,1375.98 L1788.68,1779.0 Z" fill="#ee977a"/><path d="M1788.25,1779.0 L1788.25,1169.71 A3.9,3.9 0 0 1 1796.05,1169.71 L1796.05,1779.0 Z" fill="#ee977a"/><path d="M1795.62,1779.0 L1795.62,1135.02 A3.9,3.9 0 0 1 1803.42,1135.02 L1803.42,1779.0 Z" fill="#ee977a"/><path d="M1802.98,1779.0 L1802.98,1394.73 A3.9,3.9 0 0 1 1810.78,1394.73 L1810.78,1779.0 Z" fill="#ee977a"/><path d="M1810.35,1779.0 L1810.35,1179.09 A3.9,3.9 0 0 1 1818.15,1179.09 L1818.15,1779.0 Z" fill="#ee977a"/><path d="M1817.71,1779.0 L1817.71,1051.57 A3.9,3.9 0 0 1 1825.51,1051.57 L1825.51,1779.0 Z" fill="#ee977a"/><path d="M1825.08,1779.0 L1825.08,1410.67 A3.9,3.9 0 0 1 1832.88,1410.67 L1832.88,1779.0 Z" fill="#ee977a"/><path d="M1832.45,1779.0 L1832.45,1364.73 A3.9,3.9 0 0 1 1840.25,1364.73 L1840.25,1779.0 Z" fill="#ee977a"/><path d="M1839.81,1779.0 L1839.81,1352.54 A3.9,3.9 0 0 1 1847.61,1352.54 L1847.61,1779.0 Z" fill="#ee977a"/><path d="M1847.18,1779.0 L1847.18,1284.10 A3.9,3.9 0 0 1 1854.98,1284.10 L1854.98,1779.0 Z" fill="#ee977a"/><path d="M1854.54,1779.0 L1854.54,1213.78 A3.9,3.9 0 0 1 1862.34,1213.78 L1862.34,1779.0 Z" fill="#ee977a"/><path d="M1861.91,1779.0 L1861.91,1114.39 A3.9,3.9 0 0 1 1869.71,1114.39 L1869.71,1779.0 Z" fill="#ee977a"/><path d="M1869.28,1779.0 L1869.28,1148.14 A3.9,3.9 0 0 1 1877.08,1148.14 L1877.08,1779.0 Z" fill="#ee977a"/><path d="M1876.64,1779.0 L1876.64,1153.77 A3.9,3.9 0 0 1 1884.44,1153.77 L1884.44,1779.0 Z" fill="#ee977a"/><path d="M1884.01,1779.0 L1884.01,1277.53 A3.9,3.9 0 0 1 1891.81,1277.53 L1891.81,1779.0 Z" fill="#ee977a"/><path d="M1891.37,1779.0 L1891.37,1142.52 A3.9,3.9 0 0 1 1899.17,1142.52 L1899.17,1779.0 Z" fill="#ee977a"/><path d="M1898.74,1779.0 L1898.74,1034.70 A3.9,3.9 0 0 1 1906.54,1034.70 L1906.54,1779.0 Z" fill="#ee977a"/><path d="M1906.11,1779.0 L1906.11,1105.95 A3.9,3.9 0 0 1 1913.91,1105.95 L1913.91,1779.0 Z" fill="#ee977a"/><path d="M1913.47,1779.0 L1913.47,1015.94 A3.9,3.9 0 0 1 1921.27,1015.94 L1921.27,1779.0 Z" fill="#ee977a"/><path d="M1920.84,1779.0 L1920.84,1087.20 A3.9,3.9 0 0 1 1928.64,1087.20 L1928.64,1779.0 Z" fill="#ee977a"/><path d="M1928.20,1779.0 L1928.20,1227.84 A3.9,3.9 0 0 1 1936.00,1227.84 L1936.00,1779.0 Z" fill="#ee977a"/><path d="M1935.57,1779.0 L1935.57,1227.84 A3.9,3.9 0 0 1 1943.37,1227.84 L1943.37,1779.0 Z" fill="#ee977a"/><path d="M1942.94,1779.0 L1942.94,1191.27 A3.9,3.9 0 0 1 1950.74,1191.27 L1950.74,1779.0 Z" fill="#ee977a"/><path d="M1950.30,1779.0 L1950.30,1051.57 A3.9,3.9 0 0 1 1958.10,1051.57 L1958.10,1779.0 Z" fill="#ee977a"/><path d="M1957.67,1779.0 L1957.67,1248.47 A3.9,3.9 0 0 1 1965.47,1248.47 L1965.47,1779.0 Z" fill="#ee977a"/><path d="M1965.03,1779.0 L1965.03,1248.47 A3.9,3.9 0 0 1 1972.83,1248.47 L1972.83,1779.0 Z" fill="#ee977a"/><path d="M1972.40,1779.0 L1972.40,1268.16 A3.9,3.9 0 0 1 1980.20,1268.16 L1980.20,1779.0 Z" fill="#ee977a"/><path d="M1979.77,1779.0 L1979.77,1331.91 A3.9,3.9 0 0 1 1987.57,1331.91 L1987.57,1779.0 Z" fill="#ee977a"/><path d="M1987.13,1779.0 L1987.13,1237.22 A3.9,3.9 0 0 1 1994.93,1237.22 L1994.93,1779.0 Z" fill="#ee977a"/><path d="M1994.50,1779.0 L1994.50,1105.95 A3.9,3.9 0 0 1 2002.30,1105.95 L2002.30,1779.0 Z" fill="#ee977a"/><path d="M2001.86,1779.0 L2001.86,1180.02 A3.9,3.9 0 0 1 2009.66,1180.02 L2009.66,1779.0 Z" fill="#ee977a"/><path d="M2009.23,1779.0 L2009.23,1286.91 A3.9,3.9 0 0 1 2017.03,1286.91 L2017.03,1779.0 Z" fill="#ee977a"/><path d="M2016.60,1779.0 L2016.60,1270.03 A3.9,3.9 0 0 1 2024.40,1270.03 L2024.40,1779.0 Z" fill="#ee977a"/><path d="M2023.96,1779.0 L2023.96,1301.91 A3.9,3.9 0 0 1 2031.76,1301.91 L2031.76,1779.0 Z" fill="#ee977a"/><path d="M2031.33,1779.0 L2031.33,1239.09 A3.9,3.9 0 0 1 2039.13,1239.09 L2039.13,1779.0 Z" fill="#ee977a"/><path d="M2038.69,1779.0 L2038.69,1154.71 A3.9,3.9 0 0 1 2046.49,1154.71 L2046.49,1779.0 Z" fill="#ee977a"/><path d="M2046.06,1779.0 L2046.06,1083.45 A3.9,3.9 0 0 1 2053.86,1083.45 L2053.86,1779.0 Z" fill="#ee977a"/><path d="M2053.43,1779.0 L2053.43,1148.14 A3.9,3.9 0 0 1 2061.23,1148.14 L2061.23,1779.0 Z" fill="#ee977a"/><path d="M2060.79,1779.0 L2060.79,1277.53 A3.9,3.9 0 0 1 2068.59,1277.53 L2068.59,1779.0 Z" fill="#ee977a"/><path d="M2068.16,1779.0 L2068.16,1297.22 A3.9,3.9 0 0 1 2075.96,1297.22 L2075.96,1779.0 Z" fill="#ee977a"/><path d="M2075.52,1779.0 L2075.52,1297.22 A3.9,3.9 0 0 1 2083.32,1297.22 L2083.32,1779.0 Z" fill="#ee977a"/><path d="M2082.89,1779.0 L2082.89,1483.81 A3.9,3.9 0 0 1 2090.69,1483.81 L2090.69,1779.0 Z" fill="#ee977a"/><path d="M2090.26,1779.0 L2090.26,1313.16 A3.9,3.9 0 0 1 2098.06,1313.16 L2098.06,1779.0 Z" fill="#ee977a"/><path d="M2097.62,1779.0 L2097.62,1187.52 A3.9,3.9 0 0 1 2105.42,1187.52 L2105.42,1779.0 Z" fill="#ee977a"/><path d="M2104.99,1779.0 L2104.99,1106.89 A3.9,3.9 0 0 1 2112.79,1106.89 L2112.79,1779.0 Z" fill="#ee977a"/><path d="M2112.35,1779.0 L2112.35,1342.23 A3.9,3.9 0 0 1 2120.15,1342.23 L2120.15,1779.0 Z" fill="#ee977a"/><path d="M2119.72,1779.0 L2119.72,1362.86 A3.9,3.9 0 0 1 2127.52,1362.86 L2127.52,1779.0 Z" fill="#ee977a"/><path d="M2127.09,1779.0 L2127.09,1065.64 A3.9,3.9 0 0 1 2134.89,1065.64 L2134.89,1779.0 Z" fill="#ee977a"/><path d="M2134.45,1779.0 L2134.45,1195.02 A3.9,3.9 0 0 1 2142.25,1195.02 L2142.25,1779.0 Z" fill="#ee977a"/><path d="M2141.82,1779.0 L2141.82,1343.17 A3.9,3.9 0 0 1 2149.62,1343.17 L2149.62,1779.0 Z" fill="#ee977a"/><path d="M2149.18,1779.0 L2149.18,1248.47 A3.9,3.9 0 0 1 2156.98,1248.47 L2156.98,1779.0 Z" fill="#ee977a"/><path d="M2156.55,1779.0 L2156.55,985.00 A3.9,3.9 0 0 1 2164.35,985.00 L2164.35,1779.0 Z" fill="#ee977a"/><path d="M2163.92,1779.0 L2163.92,1319.73 A3.9,3.9 0 0 1 2171.72,1319.73 L2171.72,1779.0 Z" fill="#ee977a"/><path d="M2171.28,1779.0 L2171.28,1478.18 A3.9,3.9 0 0 1 2179.08,1478.18 L2179.08,1779.0 Z" fill="#ee977a"/><path d="M2178.65,1779.0 L2178.65,1481.93 A3.9,3.9 0 0 1 2186.45,1481.93 L2186.45,1779.0 Z" fill="#ee977a"/><path d="M2186.01,1779.0 L2186.01,1108.77 A3.9,3.9 0 0 1 2193.81,1108.77 L2193.81,1779.0 Z" fill="#ee977a"/><path d="M2193.38,1779.0 L2193.38,1065.64 A3.9,3.9 0 0 1 2201.18,1065.64 L2201.18,1779.0 Z" fill="#ee977a"/><path d="M2200.75,1779.0 L2200.75,1029.07 A3.9,3.9 0 0 1 2208.55,1029.07 L2208.55,1779.0 Z" fill="#ee977a"/><path d="M2208.11,1779.0 L2208.11,1144.39 A3.9,3.9 0 0 1 2215.91,1144.39 L2215.91,1779.0 Z" fill="#ee977a"/><path d="M2215.48,1779.0 L2215.48,875.30 A3.9,3.9 0 0 1 2223.28,875.30 L2223.28,1779.0 Z" fill="#ee977a"/><path d="M2222.84,1779.0 L2222.84,866.86 A3.9,3.9 0 0 1 2230.64,866.86 L2230.64,1779.0 Z" fill="#ee977a"/><path d="M2230.21,1779.0 L2230.21,1069.39 A3.9,3.9 0 0 1 2238.01,1069.39 L2238.01,1779.0 Z" fill="#ee977a"/><path d="M2237.58,1779.0 L2237.58,1033.76 A3.9,3.9 0 0 1 2245.38,1033.76 L2245.38,1779.0 Z" fill="#ee977a"/><path d="M2244.94,1779.0 L2244.94,1184.71 A3.9,3.9 0 0 1 2252.74,1184.71 L2252.74,1779.0 Z" fill="#ee977a"/><path d="M2252.31,1779.0 L2252.31,1008.44 A3.9,3.9 0 0 1 2260.11,1008.44 L2260.11,1779.0 Z" fill="#ee977a"/><path d="M2259.67,1779.0 L2259.67,1001.88 A3.9,3.9 0 0 1 2267.47,1001.88 L2267.47,1779.0 Z" fill="#ee977a"/><path d="M2267.04,1779.0 L2267.04,1289.72 A3.9,3.9 0 0 1 2274.84,1289.72 L2274.84,1779.0 Z" fill="#ee977a"/><path d="M2274.41,1779.0 L2274.41,1323.48 A3.9,3.9 0 0 1 2282.21,1323.48 L2282.21,1779.0 Z" fill="#ee977a"/><path d="M2281.77,1779.0 L2281.77,1103.14 A3.9,3.9 0 0 1 2289.57,1103.14 L2289.57,1779.0 Z" fill="#ee977a"/><path d="M2289.14,1779.0 L2289.14,1103.14 A3.9,3.9 0 0 1 2296.94,1103.14 L2296.94,1779.0 Z" fill="#ee977a"/><path d="M2296.50,1779.0 L2296.50,1232.53 A3.9,3.9 0 0 1 2304.30,1232.53 L2304.30,1779.0 Z" fill="#ee977a"/><path d="M2303.87,1779.0 L2303.87,1321.60 A3.9,3.9 0 0 1 2311.67,1321.60 L2311.67,1779.0 Z" fill="#ee977a"/><path d="M2311.24,1779.0 L2311.24,1349.73 A3.9,3.9 0 0 1 2319.04,1349.73 L2319.04,1779.0 Z" fill="#ee977a"/><path d="M2318.60,1779.0 L2318.60,1435.05 A3.9,3.9 0 0 1 2326.40,1435.05 L2326.40,1779.0 Z" fill="#ee977a"/><path d="M2325.97,1779.0 L2325.97,1450.05 A3.9,3.9 0 0 1 2333.77,1450.05 L2333.77,1779.0 Z" fill="#ee977a"/><path d="M2333.33,1779.0 L2333.33,1386.30 A3.9,3.9 0 0 1 2341.13,1386.30 L2341.13,1779.0 Z" fill="#ee977a"/><path d="M2340.70,1779.0 L2340.70,1315.98 A3.9,3.9 0 0 1 2348.50,1315.98 L2348.50,1779.0 Z" fill="#ee977a"/><path d="M2348.07,1779.0 L2348.07,1027.19 A3.9,3.9 0 0 1 2355.87,1027.19 L2355.87,1779.0 Z" fill="#ee977a"/><path d="M2355.43,1779.0 L2355.43,833.11 A3.9,3.9 0 0 1 2363.23,833.11 L2363.23,1779.0 Z" fill="#ee977a"/><path d="M2362.80,1779.0 L2362.80,791.86 A3.9,3.9 0 0 1 2370.60,791.86 L2370.60,1779.0 Z" fill="#ee977a"/><path d="M2370.16,1779.0 L2370.16,1173.46 A3.9,3.9 0 0 1 2377.96,1173.46 L2377.96,1779.0 Z" fill="#ee977a"/><path d="M2377.53,1779.0 L2377.53,1511.00 A3.9,3.9 0 0 1 2385.33,1511.00 L2385.33,1779.0 Z" fill="#ee977a"/><path d="M2384.90,1779.0 L2384.90,1499.74 A3.9,3.9 0 0 1 2392.70,1499.74 L2392.70,1779.0 Z" fill="#ee977a"/><path d="M2392.26,1779.0 L2392.26,1415.36 A3.9,3.9 0 0 1 2400.06,1415.36 L2400.06,1779.0 Z" fill="#ee977a"/><path d="M2399.63,1779.0 L2399.63,1283.16 A3.9,3.9 0 0 1 2407.43,1283.16 L2407.43,1779.0 Z" fill="#ee977a"/><path d="M2406.99,1779.0 L2406.99,1293.47 A3.9,3.9 0 0 1 2414.79,1293.47 L2414.79,1779.0 Z" fill="#ee977a"/><path d="M2414.36,1779.0 L2414.36,1339.42 A3.9,3.9 0 0 1 2422.16,1339.42 L2422.16,1779.0 Z" fill="#ee977a"/><path d="M2421.73,1779.0 L2421.73,1545.69 A3.9,3.9 0 0 1 2429.53,1545.69 L2429.53,1779.0 Z" fill="#ee977a"/><path d="M2429.09,1779.0 L2429.09,1479.12 A3.9,3.9 0 0 1 2436.89,1479.12 L2436.89,1779.0 Z" fill="#ee977a"/><path d="M2436.46,1779.0 L2436.46,1526.00 A3.9,3.9 0 0 1 2444.26,1526.00 L2444.26,1779.0 Z" fill="#ee977a"/><path d="M2443.82,1779.0 L2443.82,1410.67 A3.9,3.9 0 0 1 2451.62,1410.67 L2451.62,1779.0 Z" fill="#ee977a"/><path d="M2451.19,1779.0 L2451.19,1401.30 A3.9,3.9 0 0 1 2458.99,1401.30 L2458.99,1779.0 Z" fill="#ee977a"/><path d="M2458.56,1779.0 L2458.56,1339.42 A3.9,3.9 0 0 1 2466.36,1339.42 L2466.36,1779.0 Z" fill="#ee977a"/><path d="M2465.92,1779.0 L2465.92,1095.64 A3.9,3.9 0 0 1 2473.72,1095.64 L2473.72,1779.0 Z" fill="#ee977a"/><path d="M2473.29,1779.0 L2473.29,1144.39 A3.9,3.9 0 0 1 2481.09,1144.39 L2481.09,1779.0 Z" fill="#ee977a"/><path d="M2480.65,1779.0 L2480.65,1067.51 A3.9,3.9 0 0 1 2488.45,1067.51 L2488.45,1779.0 Z" fill="#ee977a"/><path d="M2488.02,1779.0 L2488.02,1404.11 A3.9,3.9 0 0 1 2495.82,1404.11 L2495.82,1779.0 Z" fill="#ee977a"/><path d="M2495.39,1779.0 L2495.39,1066.57 A3.9,3.9 0 0 1 2503.19,1066.57 L2503.19,1779.0 Z" fill="#ee977a"/><path d="M2502.75,1779.0 L2502.75,869.68 A3.9,3.9 0 0 1 2510.55,869.68 L2510.55,1779.0 Z" fill="#ee977a"/><path d="M2510.12,1779.0 L2510.12,825.61 A3.9,3.9 0 0 1 2517.92,825.61 L2517.92,1779.0 Z" fill="#ee977a"/><path d="M2517.48,1779.0 L2517.48,714.97 A3.9,3.9 0 0 1 2525.28,714.97 L2525.28,1779.0 Z" fill="#f2ab90"/><path d="M2524.85,1779.0 L2524.85,958.75 A3.9,3.9 0 0 1 2532.65,958.75 L2532.65,1779.0 Z" fill="#ee977a"/></g>
<line x1="315" y1="1779.0" x2="2532" y2="1779.0" stroke="#3a2a26" stroke-width="2"/>
<text transform="translate(320.4,1822) rotate(-45)" font-family='"Liberation Serif", serif' font-size="21.5" fill="#333" text-anchor="end">Ø 2025</text>
<text transform="translate(349.9,1822) rotate(-45)" font-family='"Liberation Serif", serif' font-size="21.5" fill="#333" text-anchor="end">04.01.2025</text>
<text transform="translate(379.4,1822) rotate(-45)" font-family='"Liberation Serif", serif' font-size="21.5" fill="#333" text-anchor="end">08.01.2025</text>
<text transform="translate(408.8,1822) rotate(-45)" font-family='"Liberation Serif", serif' font-size="21.5" fill="#333" text-anchor="end">12.01.2025</text>
<text transform="translate(438.3,1822) rotate(-45)" font-family='"Liberation Serif", serif' font-size="21.5" fill="#333" text-anchor="end">16.01.2025</text>
<text transform="translate(467.8,1822) rotate(-45)" font-family='"Liberation Serif", serif' font-size="21.5" fill="#333" text-anchor="end">20.01.2025</text>
<text transform="translate(497.2,1822) rotate(-45)" font-family='"Liberation Serif", serif' font-size="21.5" fill="#333" text-anchor="end">24.01.2025</text>
<text transform="translate(526.7,1822) rotate(-45)" font-family='"Liberation Serif", serif' font-size="21.5" fill="#333" text-anchor="end">28.01.2025</text>
<text transform="translate(556.2,1822) rotate(-45)" font-family='"Liberation Serif", serif' font-size="21.5" fill="#333" text-anchor="end">01.02.2025</text>
<text transform="translate(585.6,1822) rotate(-45)" font-family='"Liberation Serif", serif' font-size="21.5" fill="#333" text-anchor="end">05.02.2025</text>
<text transform="translate(615.1,1822) rotate(-45)" font-family='"Liberation Serif", serif' font-size="21.5" fill="#333" text-anchor="end">09.02.2025</text>
<text transform="translate(644.6,1822) rotate(-45)" font-family='"Liberation Serif", serif' font-size="21.5" fill="#333" text-anchor="end">13.02.2025</text>
<text transform="translate(674.0,1822) rotate(-45)" font-family='"Liberation Serif", serif' font-size="21.5" fill="#333" text-anchor="end">17.02.2025</text>
<text transform="translate(703.5,1822) rotate(-45)" font-family='"Liberation Serif", serif' font-size="21.5" fill="#333" text-anchor="end">21.02.2025</text>
<text transform="translate(732.9,1822) rotate(-45)" font-family='"Liberation Serif", serif' font-size="21.5" fill="#333" text-anchor="end">25.02.2025</text>
<text transform="translate(762.4,1822) rotate(-45)" font-family='"Liberation Serif", serif' font-size="21.5" fill="#333" text-anchor="end">01.03.2025</text>
<text transform="translate(791.9,1822) rotate(-45)" font-family='"Liberation Serif", serif' font-size="21.5" fill="#333" text-anchor="end">05.03.2025</text>
<text transform="translate(821.3,1822) rotate(-45)" font-family='"Liberation Serif", serif' font-size="21.5" fill="#333" text-anchor="end">09.03.2025</text>
<text transform="translate(850.8,1822) rotate(-45)" font-family='"Liberation Serif", serif' font-size="21.5" fill="#333" text-anchor="end">13.03.2025</text>
<text transform="translate(880.3,1822) rotate(-45)" font-family='"Liberation Serif", serif' font-size="21.5" fill="#333" text-anchor="end">17.03.2025</text>
<text transform="translate(909.7,1822) rotate(-45)" font-family='"Liberation Serif", serif' font-size="21.5" fill="#333" text-anchor="end">21.03.2025</text>
<text transform="translate(939.2,1822) rotate(-45)" font-family='"Liberation Serif", serif' font-size="21.5" fill="#333" text-anchor="end">25.03.2025</text>
<text transform="translate(968.7,1822) rotate(-45)" font-family='"Liberation Serif", serif' font-size="21.5" fill="#333" text-anchor="end">29.03.2025</text>
<text transform="translate(998.1,1822) rotate(-45)" font-family='"Liberation Serif", serif' font-size="21.5" fill="#333" text-anchor="end">02.04.2025</text>
<text transform="translate(1027.6,1822) rotate(-45)" font-family='"Liberation Serif", serif' font-size="21.5" fill="#333" text-anchor="end">06.04.2025</text>
<text transform="translate(1057.0,1822) rotate(-45)" font-family='"Liberation Serif", serif' font-size="21.5" fill="#333" text-anchor="end">10.04.2025</text>
<text transform="translate(1086.5,1822) rotate(-45)" font-family='"Liberation Serif", serif' font-size="21.5" fill="#333" text-anchor="end">14.04.2025</text>
<text transform="translate(1116.0,1822) rotate(-45)" font-family='"Liberation Serif", serif' font-size="21.5" fill="#333" text-anchor="end">18.04.2025</text>
<text transform="translate(1145.4,1822) rotate(-45)" font-family='"Liberation Serif", serif' font-size="21.5" fill="#333" text-anchor="end">22.04.2025</text>
<text transform="translate(1174.9,1822) rotate(-45)" font-family='"Liberation Serif", serif' font-size="21.5" fill="#333" text-anchor="end">26.04.2025</text>
<text transform="translate(1204.4,1822) rotate(-45)" font-family='"Liberation Serif", serif' font-size="21.5" fill="#333" text-anchor="end">30.04.2025</text>
<text transform="translate(1233.8,1822) rotate(-45)" font-family='"Liberation Serif", serif' font-size="21.5" fill="#333" text-anchor="end">04.05.2025</text>
<text transform="translate(1263.3,1822) rotate(-45)" font-family='"Liberation Serif", serif' font-size="21.5" fill="#333" text-anchor="end">08.05.2025</text>
<text transform="translate(1292.8,1822) rotate(-45)" font-family='"Liberation Serif", serif' font-size="21.5" fill="#333" text-anchor="end">12.05.2025</text>
<text transform="translate(1322.2,1822) rotate(-45)" font-family='"Liberation Serif", serif' font-size="21.5" fill="#333" text-anchor="end">16.05.2025</text>
<text transform="translate(1351.7,1822) rotate(-45)" font-family='"Liberation Serif", serif' font-size="21.5" fill="#333" text-anchor="end">20.05.2025</text>
<text transform="translate(1381.2,1822) rotate(-45)" font-family='"Liberation Serif", serif' font-size="21.5" fill="#333" text-anchor="end">24.05.2025</text>
<text transform="translate(1410.6,1822) rotate(-45)" font-family='"Liberation Serif", serif' font-size="21.5" fill="#333" text-anchor="end">28.05.2025</text>
<text transform="translate(1440.1,1822) rotate(-45)" font-family='"Liberation Serif", serif' font-size="21.5" fill="#333" text-anchor="end">01.06.2025</text>
<text transform="translate(1469.5,1822) rotate(-45)" font-family='"Liberation Serif", serif' font-size="21.5" fill="#333" text-anchor="end">05.06.2025</text>
<text transform="translate(1499.0,1822) rotate(-45)" font-family='"Liberation Serif", serif' font-size="21.5" fill="#333" text-anchor="end">09.06.2025</text>
<text transform="translate(1528.5,1822) rotate(-45)" font-family='"Liberation Serif", serif' font-size="21.5" fill="#333" text-anchor="end">13.06.2025</text>
<text transform="translate(1557.9,1822) rotate(-45)" font-family='"Liberation Serif", serif' font-size="21.5" fill="#333" text-anchor="end">17.06.2025</text>
<text transform="translate(1587.4,1822) rotate(-45)" font-family='"Liberation Serif", serif' font-size="21.5" fill="#333" text-anchor="end">21.06.2025</text>
<text transform="translate(1616.9,1822) rotate(-45)" font-family='"Liberation Serif", serif' font-size="21.5" fill="#333" text-anchor="end">25.06.2025</text>
<text transform="translate(1646.3,1822) rotate(-45)" font-family='"Liberation Serif", serif' font-size="21.5" fill="#333" text-anchor="end">29.06.2025</text>
<text transform="translate(1675.8,1822) rotate(-45)" font-family='"Liberation Serif", serif' font-size="21.5" fill="#333" text-anchor="end">03.07.2025</text>
<text transform="translate(1705.3,1822) rotate(-45)" font-family='"Liberation Serif", serif' font-size="21.5" fill="#333" text-anchor="end">07.07.2025</text>
<text transform="translate(1734.7,1822) rotate(-45)" font-family='"Liberation Serif", serif' font-size="21.5" fill="#333" text-anchor="end">11.07.2025</text>
<text transform="translate(1764.2,1822) rotate(-45)" font-family='"Liberation Serif", serif' font-size="21.5" fill="#333" text-anchor="end">15.07.2025</text>
<text transform="translate(1793.6,1822) rotate(-45)" font-family='"Liberation Serif", serif' font-size="21.5" fill="#333" text-anchor="end">19.07.2025</text>
<text transform="translate(1823.1,1822) rotate(-45)" font-family='"Liberation Serif", serif' font-size="21.5" fill="#333" text-anchor="end">23.07.2025</text>
<text transform="translate(1852.6,1822) rotate(-45)" font-family='"Liberation Serif", serif' font-size="21.5" fill="#333" text-anchor="end">27.07.2025</text>
<text transform="translate(1882.0,1822) rotate(-45)" font-family='"Liberation Serif", serif' font-size="21.5" fill="#333" text-anchor="end">31.07.2025</text>
<text transform="translate(1911.5,1822) rotate(-45)" font-family='"Liberation Serif", serif' font-size="21.5" fill="#333" text-anchor="end">04.08.2025</text>
<text transform="translate(1941.0,1822) rotate(-45)" font-family='"Liberation Serif", serif' font-size="21.5" fill="#333" text-anchor="end">08.08.2025</text>
<text transform="translate(1970.4,1822) rotate(-45)" font-family='"Liberation Serif", serif' font-size="21.5" fill="#333" text-anchor="end">12.08.2025</text>
<text transform="translate(1999.9,1822) rotate(-45)" font-family='"Liberation Serif", serif' font-size="21.5" fill="#333" text-anchor="end">16.08.2025</text>
<text transform="translate(2029.4,1822) rotate(-45)" font-family='"Liberation Serif", serif' font-size="21.5" fill="#333" text-anchor="end">20.08.2025</text>
<text transform="translate(2058.8,1822) rotate(-45)" font-family='"Liberation Serif", serif' font-size="21.5" fill="#333" text-anchor="end">24.08.2025</text>
<text transform="translate(2088.3,1822) rotate(-45)" font-family='"Liberation Serif", serif' font-size="21.5" fill="#333" text-anchor="end">28.08.2025</text>
<text transform="translate(2117.8,1822) rotate(-45)" font-family='"Liberation Serif", serif' font-size="21.5" fill="#333" text-anchor="end">01.09.2025</text>
<text transform="translate(2147.2,1822) rotate(-45)" font-family='"Liberation Serif", serif' font-size="21.5" fill="#333" text-anchor="end">05.09.2025</text>
<text transform="translate(2176.7,1822) rotate(-45)" font-family='"Liberation Serif", serif' font-size="21.5" fill="#333" text-anchor="end">09.09.2025</text>
<text transform="translate(2206.1,1822) rotate(-45)" font-family='"Liberation Serif", serif' font-size="21.5" fill="#333" text-anchor="end">13.09.2025</text>
<text transform="translate(2235.6,1822) rotate(-45)" font-family='"Liberation Serif", serif' font-size="21.5" fill="#333" text-anchor="end">17.09.2025</text>
<text transform="translate(2265.1,1822) rotate(-45)" font-family='"Liberation Serif", serif' font-size="21.5" fill="#333" text-anchor="end">21.09.2025</text>
<text transform="translate(2294.5,1822) rotate(-45)" font-family='"Liberation Serif", serif' font-size="21.5" fill="#333" text-anchor="end">25.09.2025</text>
<text transform="translate(2324.0,1822) rotate(-45)" font-family='"Liberation Serif", serif' font-size="21.5" fill="#333" text-anchor="end">29.09.2025</text>
<text transform="translate(2353.5,1822) rotate(-45)" font-family='"Liberation Serif", serif' font-size="21.5" fill="#333" text-anchor="end">03.10.2025</text>
<text transform="translate(2382.9,1822) rotate(-45)" font-family='"Liberation Serif", serif' font-size="21.5" fill="#333" text-anchor="end">07.10.2025</text>
<text transform="translate(2412.4,1822) rotate(-45)" font-family='"Liberation Serif", serif' font-size="21.5" fill="#333" text-anchor="end">11.10.2025</text>
<text transform="translate(2441.9,1822) rotate(-45)" font-family='"Liberation Serif", serif' font-size="21.5" fill="#333" text-anchor="end">15.10.2025</text>
<text transform="translate(2471.3,1822) rotate(-45)" font-family='"Liberation Serif", serif' font-size="21.5" fill="#333" text-anchor="end">19.10.2025</text>
<text transform="translate(2500.8,1822) rotate(-45)" font-family='"Liberation Serif", serif' font-size="21.5" fill="#333" text-anchor="end">23.10.2025</text>
<text transform="translate(2530.2,1822) rotate(-45)" font-family='"Liberation Serif", serif' font-size="21.5" fill="#333" text-anchor="end">27.10.2025</text>
<text x="1406.7" y="1927.0" font-family='"Liberation Serif", serif' font-size="22" font-weight="normal" fill="#444" text-anchor="start" textLength="31.3" lengthAdjust="spacingAndGlyphs" >Tag</text>
<circle cx="1088.4" cy="1960.7" r="10.5" fill="#ee977a"/>
<text x="1115.0" y="1970.0" font-family='"Liberation Serif", serif' font-size="23.5" font-weight="bold" fill="#222" text-anchor="start" textLength="202.6" lengthAdjust="spacingAndGlyphs" >Anteil EE an der Last</text>
<circle cx="1373.4" cy="1960.7" r="10.5" fill="#cccccc"/>
<text x="1399.3" y="1970.0" font-family='"Liberation Serif", serif' font-size="23.5" font-weight="bold" fill="#cccccc" text-anchor="start" textLength="264.6" lengthAdjust="spacingAndGlyphs" >Anteil EE an der Erzeugung</text>
<line x1="1399.3" y1="1962" x2="1663.9" y2="1962" stroke="#cccccc" stroke-width="1.8"/>
<text x="1050.4" y="2048.0" font-family='"Liberation Sans", sans-serif' font-size="24.7" font-weight="normal" fill="#6c6c6c" text-anchor="start" textLength="635.3" lengthAdjust="spacingAndGlyphs" >Energy-Charts.info - letztes Update: 27.10.2025, 15:35 MEZ</text>
<rect x="2647.3" y="447.3" width="769.8" height="1646.2" rx="6" fill="#ffffff" stroke="#dfdfdf" stroke-width="1.5"/>
<circle cx="3358.4" cy="505.5" r="18.7" fill="none" stroke="#3d8a70" stroke-width="3.9"/>
<line x1="3351.3" y1="498.4" x2="3365.5" y2="512.6" stroke="#3d8a70" stroke-width="4.2"/><line x1="3365.5" y1="498.4" x2="3351.3" y2="512.6" stroke="#3d8a70" stroke-width="4.2"/>
<path d="M2683.3,638.9 L2683.3,565.6 Q2683.3,560.6 2688.3,560.6 L3376.5,560.6 Q3381.5,560.6 3381.5,565.6 L3381.5,638.9 Z" fill="#429277"/>
<rect x="2711.8" y="590.6" width="18.5" height="18.1" rx="2" fill="none" stroke="#fff" stroke-width="2.2"/>
<rect x="2711" y="589.6" width="20.3" height="4.2" rx="1.5" fill="#fff"/>
<line x1="2716.4" y1="585.5" x2="2716.4" y2="590" stroke="#fff" stroke-width="2.8" stroke-linecap="round"/><line x1="2725.8" y1="585.5" x2="2725.8" y2="590" stroke="#fff" stroke-width="2.8" stroke-linecap="round"/>
<polyline points="2716.2,600.8 2719.6,604 2725.4,597.6" fill="none" stroke="#fff" stroke-width="2.6" stroke-linecap="round" stroke-linejoin="round"/>
<text x="2758.7" y="610.2" font-family='"Liberation Sans", sans-serif' font-size="33" font-weight="normal" fill="#ffffff" text-anchor="start" textLength="215.9" lengthAdjust="spacingAndGlyphs" >Datumsauswahl</text>
<polyline points="3331.3,604.9 3341.8,592.9 3352.3,604.9" fill="none" stroke="#ffffff" stroke-width="4.2" stroke-linecap="round" stroke-linejoin="round"/>
<path d="M2683.3,638.9 L2683.3,1047.5 Q2683.3,1052.5 2688.3,1052.5 L3376.5,1052.5 Q3381.5,1052.5 3381.5,1047.5 L3381.5,638.9" fill="#ffffff" stroke="#e2e2e2" stroke-width="1.5"/>
<text x="2711.6" y="698.5" font-family='"Liberation Sans", sans-serif' font-size="29" font-weight="normal" fill="#4a4a4a" text-anchor="start" textLength="98.4" lengthAdjust="spacingAndGlyphs" >Intervall</text>
<rect x="2983.8" y="664.2" width="371.4" height="57.6" rx="6.5" fill="none" stroke="#b6e6d7" stroke-width="5.6"/>
<rect x="2986.8" y="667.2" width="365.2" height="51.5" rx="4" fill="#ffffff" stroke="#9ad9c4" stroke-width="2"/>
<text x="3002.8" y="700.8" font-family='"Liberation Sans", sans-serif' font-size="25.5" font-weight="normal" fill="#333" text-anchor="start" textLength="37.9" lengthAdjust="spacingAndGlyphs" >Tag</text>
<polyline points="3323.2,688.0 3330.4,696.0 3337.7,688.0" fill="none" stroke="#222" stroke-width="3" stroke-linecap="round" stroke-linejoin="round"/>
<text x="2711.6" y="779.3" font-family='"Liberation Sans", sans-serif' font-size="29" font-weight="normal" fill="#4a4a4a" text-anchor="start" textLength="54.4" lengthAdjust="spacingAndGlyphs" >Jahr</text>
<rect x="2987.5" y="748.9" width="363.9" height="50.7" rx="4" fill="#ffffff" stroke="#ced4da" stroke-width="1.5"/>
<text x="3003.3" y="782.2" font-family='"Liberation Sans", sans-serif' font-size="25.5" font-weight="normal" fill="#333" text-anchor="start" textLength="56.3" lengthAdjust="spacingAndGlyphs" >2025</text>
<polyline points="3323.2,768.5 3330.4,776.5 3337.7,768.5" fill="none" stroke="#222" stroke-width="3" stroke-linecap="round" stroke-linejoin="round"/>
<circle cx="3267.7" cy="834.4" r="18.5" fill="none" stroke="#777" stroke-width="3.7"/>
<polygon points="3257.2,834.4 3266.9,825.2 3266.9,832.1 3277.9,832.1 3277.9,836.7 3266.9,836.7 3266.9,843.6" fill="#777" stroke="#777" stroke-width="0.6" stroke-linejoin="round"/>
<circle cx="3328.3" cy="834.4" r="18.5" fill="none" stroke="#777" stroke-width="3.7"/>
<polygon points="3338.8,834.4 3329.1,825.2 3329.1,832.1 3318.1,832.1 3318.1,836.7 3329.1,836.7 3329.1,843.6" fill="#777" stroke="#777" stroke-width="0.6" stroke-linejoin="round"/>
<text x="2711.6" y="917.3" font-family='"Liberation Sans", sans-serif' font-size="29" font-weight="normal" fill="#4a4a4a" text-anchor="start" textLength="245.4" lengthAdjust="spacingAndGlyphs" >Tageswerte in 2025</text>
<rect x="2987.5" y="887" width="363.9" height="51.5" rx="4" fill="#ffffff" stroke="#ced4da" stroke-width="1.5"/>
<text x="3003.3" y="920.6" font-family='"Liberation Sans", sans-serif' font-size="25.5" font-weight="normal" fill="#333" text-anchor="start" textLength="189.4" lengthAdjust="spacingAndGlyphs" >alle Tage in 2025</text>
<polyline points="3323.2,907.0 3330.4,915.0 3337.7,907.0" fill="none" stroke="#222" stroke-width="3" stroke-linecap="round" stroke-linejoin="round"/>
<circle cx="3267.7" cy="973.6" r="18.5" fill="none" stroke="#777" stroke-width="3.7"/>
<polygon points="3257.2,973.6 3266.9,964.4 3266.9,971.3 3277.9,971.3 3277.9,975.9 3266.9,975.9 3266.9,982.8" fill="#777" stroke="#777" stroke-width="0.6" stroke-linejoin="round"/>
<circle cx="3328.3" cy="973.6" r="18.5" fill="none" stroke="#777" stroke-width="3.7"/>
<polygon points="3338.8,973.6 3329.1,964.4 3329.1,971.3 3318.1,971.3 3318.1,975.9 3329.1,975.9 3329.1,982.8" fill="#777" stroke="#777" stroke-width="0.6" stroke-linejoin="round"/>
<path d="M2683.3,1148.9 L2683.3,1075.2 Q2683.3,1070.2 2688.3,1070.2 L3376.5,1070.2 Q3381.5,1070.2 3381.5,1075.2 L3381.5,1148.9 Z" fill="#429277"/>
<rect x="2710.2" y="1095.7" width="8.8" height="8.7" rx="1" fill="#fff"/><rect x="2731.7" y="1095.7" width="9.1" height="9.1" rx="1" fill="#fff"/><rect x="2720.9" y="1111.2" width="9" height="8.8" rx="1" fill="#fff"/>
<rect x="2718.5" y="1098" width="13.5" height="3.9" fill="#fff"/>
<line x1="2716" y1="1103.5" x2="2721.3" y2="1110.5" stroke="#fff" stroke-width="3"/>
<text x="2758.7" y="1119.8" font-family='"Liberation Sans", sans-serif' font-size="33" font-weight="normal" fill="#ffffff" text-anchor="start" textLength="103.7" lengthAdjust="spacingAndGlyphs" >Quellen</text>
<polyline points="3331.3,1114.5 3341.8,1102.5 3352.3,1114.5" fill="none" stroke="#ffffff" stroke-width="4.2" stroke-linecap="round" stroke-linejoin="round"/>
<path d="M2683.3,1148.9 L2683.3,1423.8 Q2683.3,1428.8 2688.3,1428.8 L3376.5,1428.8 Q3381.5,1428.8 3381.5,1423.8 L3381.5,1148.9" fill="#ffffff" stroke="#e2e2e2" stroke-width="1.5"/>
<text x="2711.6" y="1208.8" font-family='"Liberation Sans", sans-serif' font-size="29" font-weight="normal" fill="#555" text-anchor="start" textLength="122.4" lengthAdjust="spacingAndGlyphs" >Öffentlich</text>
<line x1="2711.6" y1="1211.3" x2="2834" y2="1211.3" stroke="#555" stroke-width="1.6"/>
<circle cx="2723" cy="1257.4" r="11.3" fill="#9a9a9a" stroke="#8a8a8a" stroke-width="1.5"/>
<circle cx="2723" cy="1257.4" r="4.2" fill="#fff"/>
<text x="2749.5" y="1268.4" font-family='"Liberation Sans", sans-serif' font-size="29" font-weight="normal" fill="#555" text-anchor="start" textLength="231.8" lengthAdjust="spacingAndGlyphs" >Anteil Erneuerbare</text>
<circle cx="2723" cy="1311.8" r="10.8" fill="#fff" stroke="#777" stroke-width="2.6"/>
<text x="2749.5" y="1322.8" font-family='"Liberation Sans", sans-serif' font-size="29" font-weight="normal" fill="#555" text-anchor="start" textLength="141.5" lengthAdjust="spacingAndGlyphs" >Anteil Wind</text>
<circle cx="2723" cy="1366.3" r="10.8" fill="#fff" stroke="#777" stroke-width="2.6"/>
<text x="2749.5" y="1377.3" font-family='"Liberation Sans", sans-serif' font-size="29" font-weight="normal" fill="#555" text-anchor="start" textLength="141.5" lengthAdjust="spacingAndGlyphs" >Anteil Solar</text>
<path d="M2683.3,1444.2 L2683.3,1718.8 Q2683.3,1723.8 2688.3,1723.8 L3376.5,1723.8 Q3381.5,1723.8 3381.5,1718.8 L3381.5,1444.2" fill="#ffffff" stroke="#e2e2e2" stroke-width="1.5"/>
<text x="2711.6" y="1503.1" font-family='"Liberation Sans", sans-serif' font-size="29" font-weight="normal" fill="#555" text-anchor="start" textLength="96.4" lengthAdjust="spacingAndGlyphs" >Gesamt</text>
<line x1="2711.6" y1="1505.6" x2="2808" y2="1505.6" stroke="#555" stroke-width="1.6"/>
<circle cx="2723" cy="1552.8" r="10.8" fill="#fff" stroke="#777" stroke-width="2.6"/>
<text x="2749.5" y="1563.8" font-family='"Liberation Sans", sans-serif' font-size="29" font-weight="normal" fill="#555" text-anchor="start" textLength="231.8" lengthAdjust="spacingAndGlyphs" >Anteil Erneuerbare</text>
<circle cx="2723" cy="1608" r="10.8" fill="#fff" stroke="#777" stroke-width="2.6"/>
<text x="2749.5" y="1619.0" font-family='"Liberation Sans", sans-serif' font-size="29" font-weight="normal" fill="#555" text-anchor="start" textLength="141.5" lengthAdjust="spacingAndGlyphs" >Anteil Wind</text>
<circle cx="2723" cy="1662.4" r="10.8" fill="#fff" stroke="#777" stroke-width="2.6"/>
<text x="2749.5" y="1673.4" font-family='"Liberation Sans", sans-serif' font-size="29" font-weight="normal" fill="#555" text-anchor="start" textLength="141.5" lengthAdjust="spacingAndGlyphs" >Anteil Solar</text>
<rect x="2683.3" y="1740.8" width="698.1999999999998" height="70.6" rx="5" fill="#ffffff" stroke="#e2e2e2" stroke-width="1.5"/>
<polygon points="2715.07,1769.89 2715.47,1767.53 2718.53,1767.53 2718.93,1769.89 2721.50,1771.37 2723.74,1770.54 2725.27,1773.19 2723.43,1774.72 2723.43,1777.68 2725.27,1779.21 2723.74,1781.86 2721.50,1781.03 2718.93,1782.51 2718.53,1784.87 2715.47,1784.87 2715.07,1782.51 2712.50,1781.03 2710.26,1781.86 2708.73,1779.21 2710.57,1777.68 2710.57,1774.72 2708.73,1773.19 2710.26,1770.54 2712.50,1771.37" fill="#333" stroke="#333" stroke-width="0.8" stroke-linejoin="round"/>
<circle cx="2717" cy="1776.1999999999998" r="2.9" fill="#fff"/>
<polygon points="2729.81,1766.55 2730.00,1765.27 2731.60,1765.27 2731.79,1766.55 2733.12,1767.31 2734.32,1766.84 2735.12,1768.23 2734.11,1769.04 2734.11,1770.56 2735.12,1771.37 2734.32,1772.76 2733.12,1772.29 2731.79,1773.05 2731.60,1774.33 2730.00,1774.33 2729.81,1773.05 2728.48,1772.29 2727.28,1772.76 2726.48,1771.37 2727.49,1770.56 2727.49,1769.04 2726.48,1768.23 2727.28,1766.84 2728.48,1767.31" fill="#333" stroke="#333" stroke-width="0.8" stroke-linejoin="round"/>
<circle cx="2730.8" cy="1769.8" r="1.5" fill="#fff"/>
<polygon points="2729.81,1779.35 2730.00,1778.07 2731.60,1778.07 2731.79,1779.35 2733.12,1780.11 2734.32,1779.64 2735.12,1781.03 2734.11,1781.84 2734.11,1783.36 2735.12,1784.17 2734.32,1785.56 2733.12,1785.09 2731.79,1785.85 2731.60,1787.13 2730.00,1787.13 2729.81,1785.85 2728.48,1785.09 2727.28,1785.56 2726.48,1784.17 2727.49,1783.36 2727.49,1781.84 2726.48,1781.03 2727.28,1779.64 2728.48,1780.11" fill="#333" stroke="#333" stroke-width="0.8" stroke-linejoin="round"/>
<circle cx="2730.8" cy="1782.6" r="1.5" fill="#fff"/>
<text x="2753.2" y="1786.3" font-family='"Liberation Sans", sans-serif' font-size="29" font-weight="normal" fill="#3a3a3a" text-anchor="start" textLength="167.3" lengthAdjust="spacingAndGlyphs" >Konfiguration</text>
<polyline points="3337.2,1770.8 3345.4,1779.8 3353.7,1770.8" fill="none" stroke="#333" stroke-width="3.3" stroke-linecap="round" stroke-linejoin="round"/>
<rect x="2683.3" y="1826.8" width="698.1999999999998" height="70.3" rx="5" fill="#ffffff" stroke="#e2e2e2" stroke-width="1.5"/>
<path d="M2711,1852.7499999999998 L2724.5,1852.7499999999998 Q2726.6,1852.7499999999998 2726.6,1854.9499999999998 L2726.6,1865.1499999999999 L2721.8,1870.9499999999998 L2711,1870.9499999999998 Q2708.9,1870.9499999999998 2708.9,1868.9499999999998 L2708.9,1854.9499999999998 Q2708.9,1852.7499999999998 2711,1852.7499999999998 Z" fill="none" stroke="#333" stroke-width="2.2" stroke-linejoin="round"/>
<polyline points="2721,1870.9499999999998 2721,1865.1499999999999 2726.6,1865.1499999999999" fill="none" stroke="#333" stroke-width="2.2" stroke-linejoin="round"/>
<text x="2753.2" y="1872.1" font-family='"Liberation Sans", sans-serif' font-size="29" font-weight="normal" fill="#3a3a3a" text-anchor="start" textLength="171.8" lengthAdjust="spacingAndGlyphs" >Beschreibung</text>
<polyline points="3337.2,1856.6 3345.4,1865.6 3353.7,1856.6" fill="none" stroke="#333" stroke-width="3.3" stroke-linecap="round" stroke-linejoin="round"/>
<rect x="2683.3" y="1912.5" width="698.1999999999998" height="70.6" rx="5" fill="#ffffff" stroke="#e2e2e2" stroke-width="1.5"/>
<rect x="2716.3" y="1937.5" width="5.3" height="9.5" fill="#333"/>
<polygon points="2711.9,1946.3 2725.8,1946.3 2718.9,1953.7" fill="#333"/>
<path d="M2708.1,1953.0 L2714.5,1953.0 L2718.9,1957.0 L2723.3,1953.0 L2729.9,1953.0 L2729.9,1959.6 L2708.1,1959.6 Z" fill="#333"/>
<circle cx="2723.7" cy="1957.3" r="0.9" fill="#fff"/><circle cx="2726.6" cy="1957.3" r="0.9" fill="#fff"/>
<text x="2753.2" y="1958.0" font-family='"Liberation Sans", sans-serif' font-size="29" font-weight="normal" fill="#3a3a3a" text-anchor="start" textLength="80.1" lengthAdjust="spacingAndGlyphs" >Export</text>
<polyline points="3337.2,1942.5 3345.4,1951.5 3353.7,1942.5" fill="none" stroke="#333" stroke-width="3.3" stroke-linecap="round" stroke-linejoin="round"/>
<rect x="2683.3" y="1998.9" width="698.1999999999998" height="70.7" rx="5" fill="#ffffff" stroke="#e2e2e2" stroke-width="1.5"/>
<polygon points="2719,2023.35 2729.9,2034.25 2719,2045.15 2708.1,2034.25" fill="#333" stroke="#333" stroke-width="1.5" stroke-linejoin="round"/>
<path d="M2716.3,2037.85 L2716.3,2033.55 L2722,2033.55" fill="none" stroke="#fff" stroke-width="2.4"/>
<polygon points="2721.2,2029.65 2725.4,2033.55 2721.2,2037.45" fill="#fff"/>
<text x="2753.2" y="2044.5" font-family='"Liberation Sans", sans-serif' font-size="29" font-weight="normal" fill="#3a3a3a" text-anchor="start" textLength="111.0" lengthAdjust="spacingAndGlyphs" >Hinweise</text>
<polyline points="3337.2,2029.0 3345.4,2038.0 3353.7,2029.0" fill="none" stroke="#333" stroke-width="3.3" stroke-linecap="round" stroke-linejoin="round"/>
<g filter="url(#ttsh)">
<path d="M2353.3,561.8 L2690.1,561.8 Q2694.1,561.8 2694.1,565.8 L2694.1,692.7 Q2694.1,696.7 2690.1,696.7 L2533.5,696.7 L2521.7,708.6 L2509.9,696.7 L2353.3,696.7 Q2349.3,696.7 2349.3,692.7 L2349.3,565.8 Q2349.3,561.8 2353.3,561.8 Z" fill="#f7f7f7"/>
</g>
<text x="2365.2" y="598.8" font-family='"Liberation Serif", serif' font-size="21.5" font-weight="normal" fill="#2b2b2b" text-anchor="start" textLength="97.3" lengthAdjust="spacingAndGlyphs" >26.10.2025</text>
<line x1="2365" y1="629.5" x2="2677" y2="629.5" stroke="#888" stroke-width="1.5"/>
<circle cx="2371.8" cy="665.2" r="5.5" fill="#ee977a"/>
<text x="2384.9" y="671.3" font-family='"Liberation Serif", serif' font-size="22.5" font-weight="bold" fill="#2b2b2b" text-anchor="start" textLength="201.7" lengthAdjust="spacingAndGlyphs" >Anteil EE an der Last</text>
<text x="2594.0" y="671.3" font-family='"Liberation Serif", serif' font-size="22.5" font-weight="normal" fill="#2b2b2b" text-anchor="start" textLength="81.8" lengthAdjust="spacingAndGlyphs" >: 114,2 %</text>
</g>
<rect x="111.1" y="75.1" width="3346.8" height="2102.1" rx="48.5" ry="48.5" fill="none" stroke="rgba(255,255,255,0.85)" stroke-width="1.2"/>
<rect x="109.5" y="73.5" width="3350.0" height="2105.3" rx="50" ry="50" fill="none" stroke="rgba(0,0,0,0.25)" stroke-width="1.5"/>
</svg></body></html>
